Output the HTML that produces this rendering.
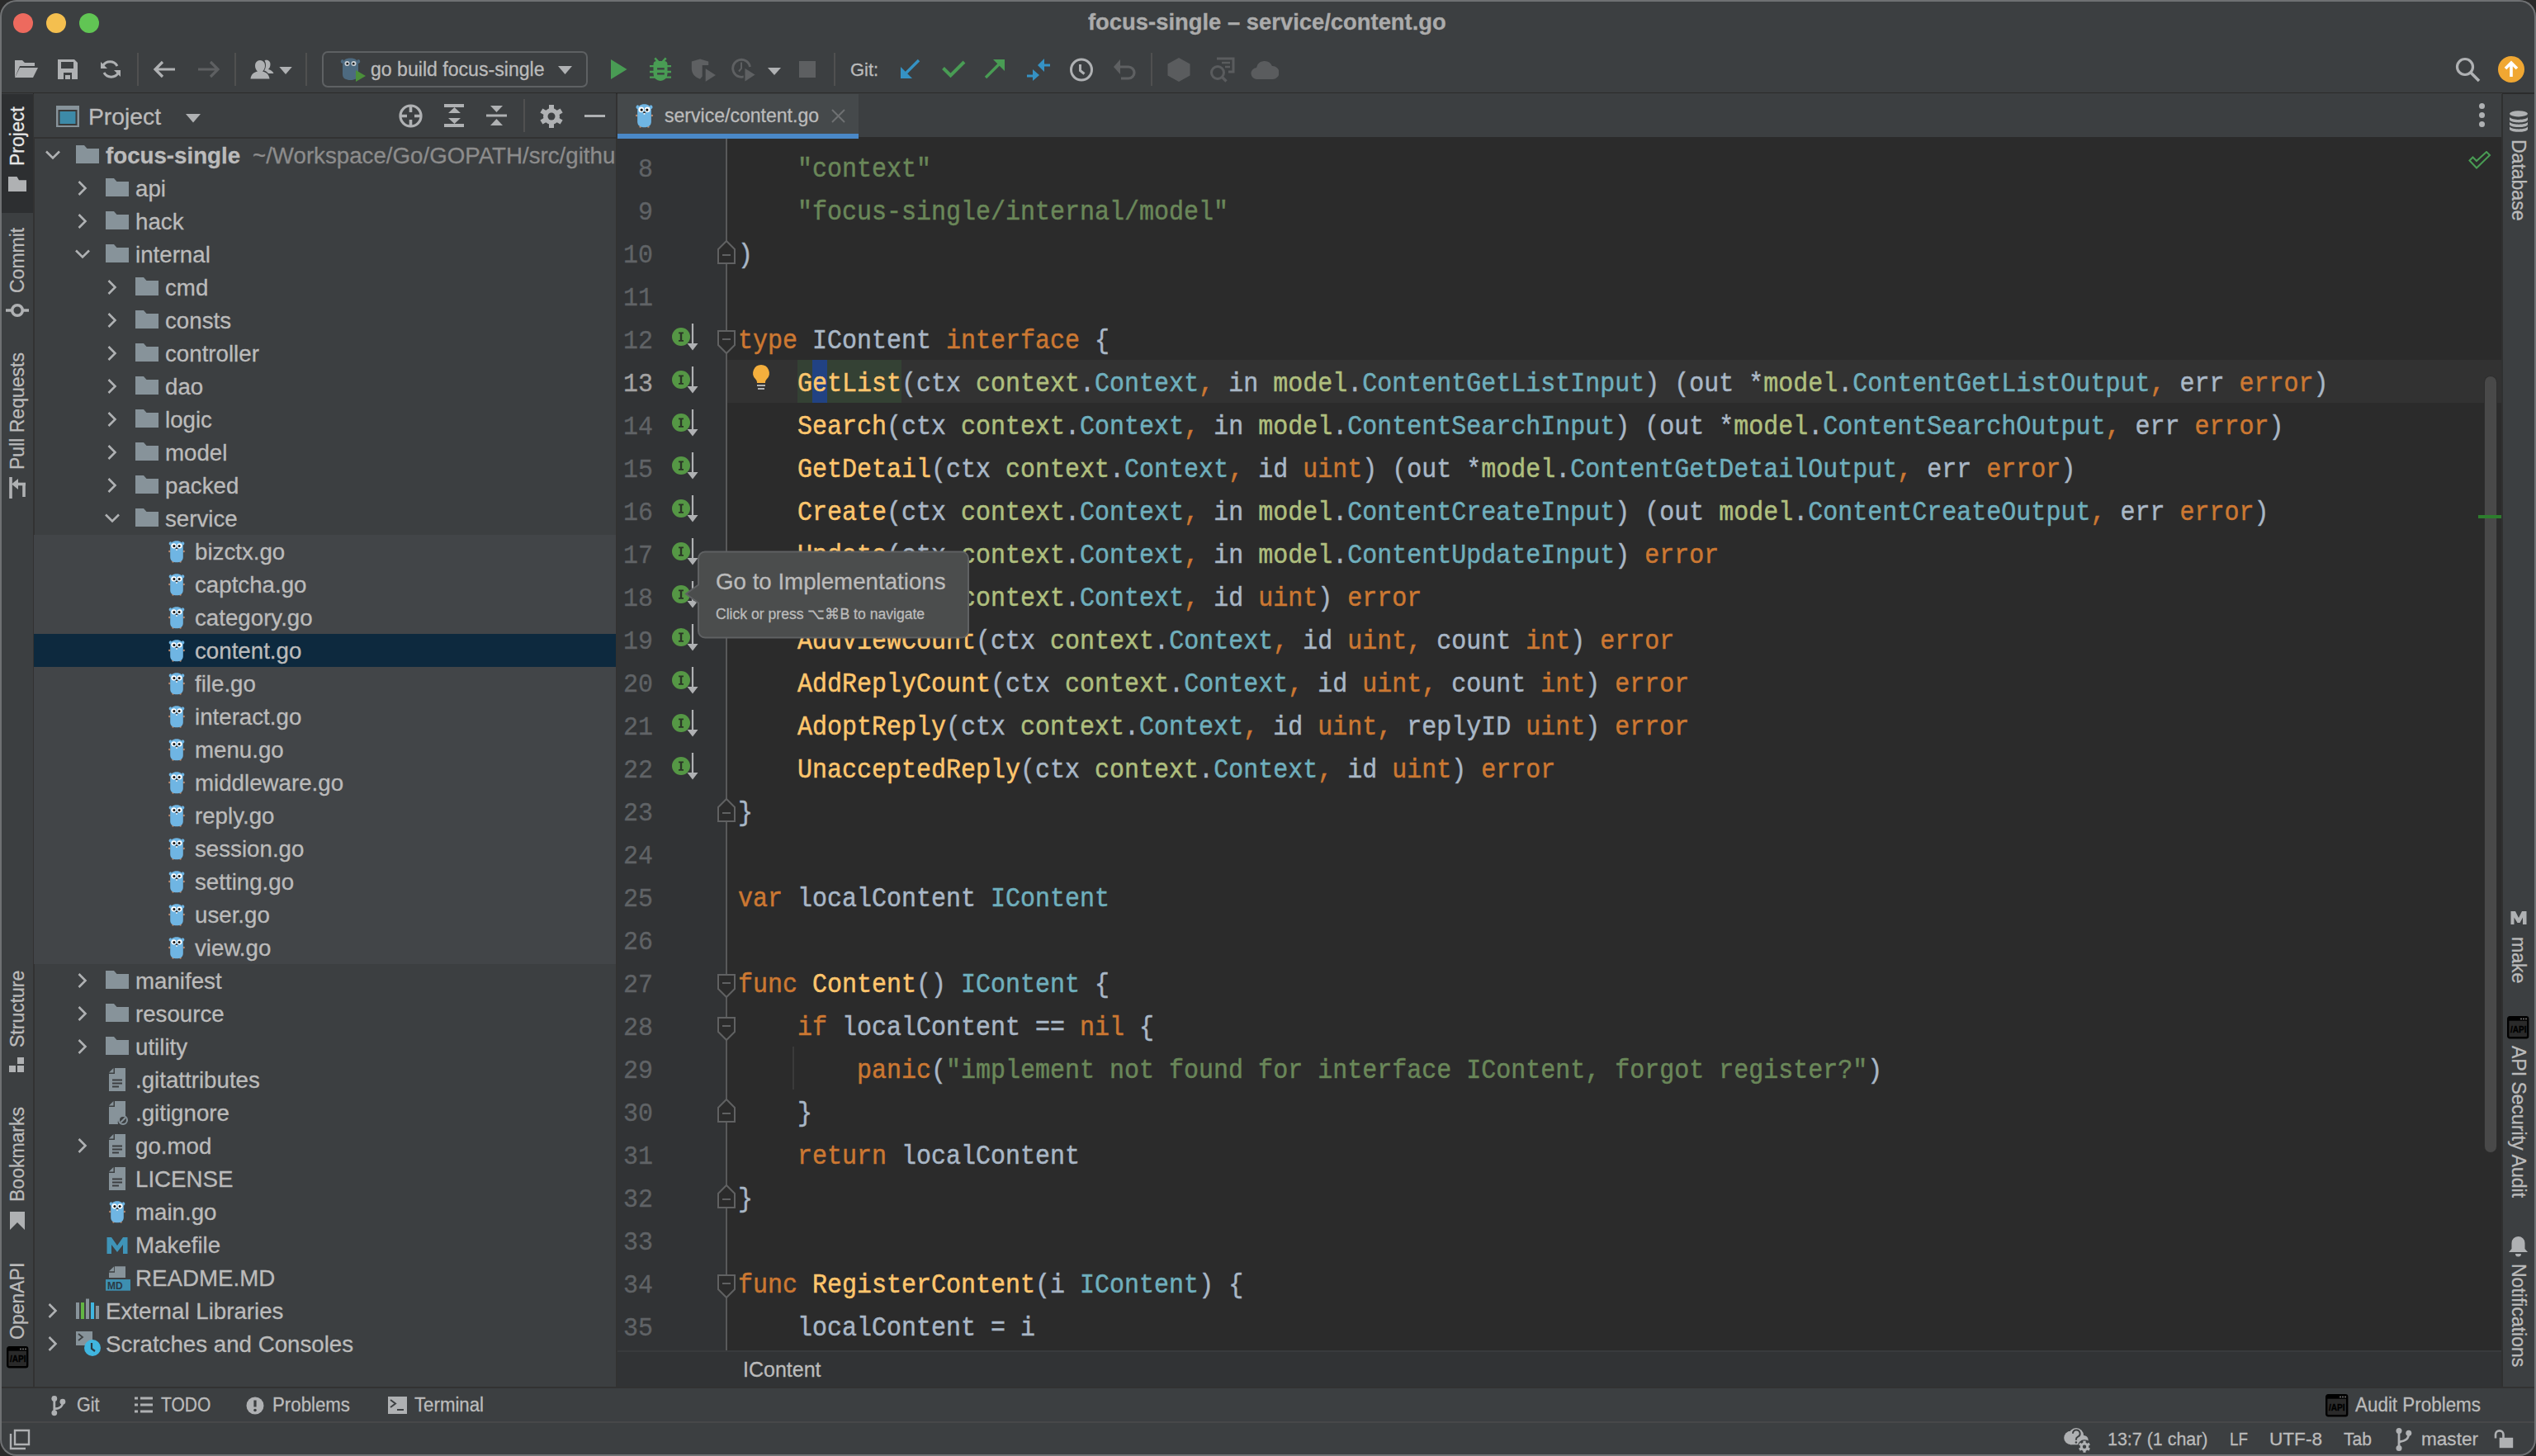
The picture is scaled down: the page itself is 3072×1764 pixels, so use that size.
<!DOCTYPE html><html><head><meta charset="utf-8"><style>
html,body{margin:0;padding:0}
body{width:3072px;height:1764px;overflow:hidden;background:#2a2a2a;position:relative}
.t{position:absolute;white-space:pre;line-height:normal;-webkit-text-stroke:0.3px currentColor}
.r{position:absolute}
</style></head><body>
<div class="r" style="left:0;top:0;width:3072px;height:1764px;background:#3c3f41;border-radius:20px;box-shadow:inset 0 0 0 2px #6f7173"></div>

<div class="r" style="left:16px;top:16px;width:24px;height:24px;border-radius:50%;background:#ed6a5e"></div>
<div class="r" style="left:56px;top:16px;width:24px;height:24px;border-radius:50%;background:#f4bf4f"></div>
<div class="r" style="left:96px;top:16px;width:24px;height:24px;border-radius:50%;background:#61c554"></div>
<div class="t" style="left:1318px;top:11.2px;font-size:27.4px;color:#ababab;font-weight:700;font-family:'Liberation Sans', sans-serif;">focus-single – service/content.go</div>
<div class="r" style="left:2px;top:112px;width:3068px;height:2px;background:#2b2b2b;"></div>
<div class="r" style="left:2px;top:113px;width:38px;height:1567px;background:#3c3f41;"></div>
<div class="r" style="left:40px;top:114px;width:2px;height:1566px;background:#323232;"></div>
<div class="r" style="left:2px;top:114px;width:38px;height:144px;background:#2d2f31;"></div>
<div class="r" style="left:41px;top:113px;width:705px;height:54px;background:#3c3f41;"></div>
<div class="r" style="left:41px;top:166px;width:705px;height:2px;background:#323232;"></div>
<div class="r" style="left:746px;top:114px;width:2px;height:1566px;background:#323232;"></div>
<div class="r" style="left:748px;top:113px;width:2283px;height:54px;background:#3c3f41;"></div>
<div class="r" style="left:748px;top:166px;width:2283px;height:2px;background:#2b2b2b;"></div>
<div class="r" style="left:748px;top:114px;width:292px;height:48px;background:#45494b;"></div>
<div class="r" style="left:748px;top:162px;width:292px;height:6px;background:#4a88c7;"></div>
<div class="r" style="left:748px;top:168px;width:133px;height:1468px;background:#313335;"></div>
<div class="r" style="left:881px;top:168px;width:2149px;height:1468px;background:#2b2b2b;"></div>
<div class="r" style="left:748px;top:1636px;width:2283px;height:2px;background:#393b3d;"></div>
<div class="r" style="left:748px;top:1638px;width:2283px;height:44px;background:#313335;"></div>
<div class="r" style="left:3030px;top:114px;width:2px;height:1566px;background:#2f3030;"></div>
<div class="r" style="left:3032px;top:114px;width:38px;height:1566px;background:#3c3f41;"></div>
<div class="r" style="left:2px;top:1680px;width:3068px;height:2px;background:#323232;"></div>
<div class="r" style="left:2px;top:1722px;width:3068px;height:2px;background:#474849;"></div>
<div class="r" style="left:881px;top:436px;width:2149px;height:52px;background:#323232;"></div>
<div class="r" style="left:966px;top:436px;width:126px;height:52px;background:#344134;"></div>
<div class="r" style="left:984px;top:436px;width:18px;height:52px;background:#214283;"></div>
<div class="r" style="left:879px;top:168px;width:2px;height:1468px;background:#58595a;"></div>
<div class="r" style="left:960px;top:1268px;width:2px;height:52px;background:#3b3b3b;"></div>
<div class="t" style="left:894px;top:189.0px;font-size:30px;color:#a9b7c6;font-weight:400;font-family:'Liberation Mono', monospace;-webkit-text-stroke:0.45px currentColor;transform-origin:0 25px;transform:scaleY(1.12)"><span style="color:#a9b7c6">    </span><span style="color:#6a8759">"context"</span></div>
<div class="t" style="left:894px;top:241.0px;font-size:30px;color:#a9b7c6;font-weight:400;font-family:'Liberation Mono', monospace;-webkit-text-stroke:0.45px currentColor;transform-origin:0 25px;transform:scaleY(1.12)"><span style="color:#a9b7c6">    </span><span style="color:#6a8759">"focus-single/internal/model"</span></div>
<div class="t" style="left:894px;top:293.0px;font-size:30px;color:#a9b7c6;font-weight:400;font-family:'Liberation Mono', monospace;-webkit-text-stroke:0.45px currentColor;transform-origin:0 25px;transform:scaleY(1.12)"><span style="color:#a9b7c6">)</span></div>
<div class="t" style="left:894px;top:397.0px;font-size:30px;color:#a9b7c6;font-weight:400;font-family:'Liberation Mono', monospace;-webkit-text-stroke:0.45px currentColor;transform-origin:0 25px;transform:scaleY(1.12)"><span style="color:#cc7832">type</span><span style="color:#a9b7c6"> IContent </span><span style="color:#cc7832">interface</span><span style="color:#a9b7c6"> {</span></div>
<div class="t" style="left:894px;top:449.0px;font-size:30px;color:#a9b7c6;font-weight:400;font-family:'Liberation Mono', monospace;-webkit-text-stroke:0.45px currentColor;transform-origin:0 25px;transform:scaleY(1.12)"><span style="color:#a9b7c6">    </span><span style="color:#ffc66d">GetList</span><span style="color:#a9b7c6">(ctx </span><span style="color:#afbf7e">context</span><span style="color:#a9b7c6">.</span><span style="color:#6fafbd">Context</span><span style="color:#cc7832">,</span><span style="color:#a9b7c6"> in </span><span style="color:#afbf7e">model</span><span style="color:#a9b7c6">.</span><span style="color:#6fafbd">ContentGetListInput</span><span style="color:#a9b7c6">) (out *</span><span style="color:#afbf7e">model</span><span style="color:#a9b7c6">.</span><span style="color:#6fafbd">ContentGetListOutput</span><span style="color:#cc7832">,</span><span style="color:#a9b7c6"> err </span><span style="color:#cc7832">error</span><span style="color:#a9b7c6">)</span></div>
<div class="t" style="left:894px;top:501.0px;font-size:30px;color:#a9b7c6;font-weight:400;font-family:'Liberation Mono', monospace;-webkit-text-stroke:0.45px currentColor;transform-origin:0 25px;transform:scaleY(1.12)"><span style="color:#a9b7c6">    </span><span style="color:#ffc66d">Search</span><span style="color:#a9b7c6">(ctx </span><span style="color:#afbf7e">context</span><span style="color:#a9b7c6">.</span><span style="color:#6fafbd">Context</span><span style="color:#cc7832">,</span><span style="color:#a9b7c6"> in </span><span style="color:#afbf7e">model</span><span style="color:#a9b7c6">.</span><span style="color:#6fafbd">ContentSearchInput</span><span style="color:#a9b7c6">) (out *</span><span style="color:#afbf7e">model</span><span style="color:#a9b7c6">.</span><span style="color:#6fafbd">ContentSearchOutput</span><span style="color:#cc7832">,</span><span style="color:#a9b7c6"> err </span><span style="color:#cc7832">error</span><span style="color:#a9b7c6">)</span></div>
<div class="t" style="left:894px;top:553.0px;font-size:30px;color:#a9b7c6;font-weight:400;font-family:'Liberation Mono', monospace;-webkit-text-stroke:0.45px currentColor;transform-origin:0 25px;transform:scaleY(1.12)"><span style="color:#a9b7c6">    </span><span style="color:#ffc66d">GetDetail</span><span style="color:#a9b7c6">(ctx </span><span style="color:#afbf7e">context</span><span style="color:#a9b7c6">.</span><span style="color:#6fafbd">Context</span><span style="color:#cc7832">,</span><span style="color:#a9b7c6"> id </span><span style="color:#cc7832">uint</span><span style="color:#a9b7c6">) (out *</span><span style="color:#afbf7e">model</span><span style="color:#a9b7c6">.</span><span style="color:#6fafbd">ContentGetDetailOutput</span><span style="color:#cc7832">,</span><span style="color:#a9b7c6"> err </span><span style="color:#cc7832">error</span><span style="color:#a9b7c6">)</span></div>
<div class="t" style="left:894px;top:605.0px;font-size:30px;color:#a9b7c6;font-weight:400;font-family:'Liberation Mono', monospace;-webkit-text-stroke:0.45px currentColor;transform-origin:0 25px;transform:scaleY(1.12)"><span style="color:#a9b7c6">    </span><span style="color:#ffc66d">Create</span><span style="color:#a9b7c6">(ctx </span><span style="color:#afbf7e">context</span><span style="color:#a9b7c6">.</span><span style="color:#6fafbd">Context</span><span style="color:#cc7832">,</span><span style="color:#a9b7c6"> in </span><span style="color:#afbf7e">model</span><span style="color:#a9b7c6">.</span><span style="color:#6fafbd">ContentCreateInput</span><span style="color:#a9b7c6">) (out </span><span style="color:#afbf7e">model</span><span style="color:#a9b7c6">.</span><span style="color:#6fafbd">ContentCreateOutput</span><span style="color:#cc7832">,</span><span style="color:#a9b7c6"> err </span><span style="color:#cc7832">error</span><span style="color:#a9b7c6">)</span></div>
<div class="t" style="left:894px;top:657.0px;font-size:30px;color:#a9b7c6;font-weight:400;font-family:'Liberation Mono', monospace;-webkit-text-stroke:0.45px currentColor;transform-origin:0 25px;transform:scaleY(1.12)"><span style="color:#a9b7c6">    </span><span style="color:#ffc66d">Update</span><span style="color:#a9b7c6">(ctx </span><span style="color:#afbf7e">context</span><span style="color:#a9b7c6">.</span><span style="color:#6fafbd">Context</span><span style="color:#cc7832">,</span><span style="color:#a9b7c6"> in </span><span style="color:#afbf7e">model</span><span style="color:#a9b7c6">.</span><span style="color:#6fafbd">ContentUpdateInput</span><span style="color:#a9b7c6">) </span><span style="color:#cc7832">error</span></div>
<div class="t" style="left:894px;top:709.0px;font-size:30px;color:#a9b7c6;font-weight:400;font-family:'Liberation Mono', monospace;-webkit-text-stroke:0.45px currentColor;transform-origin:0 25px;transform:scaleY(1.12)"><span style="color:#a9b7c6">    </span><span style="color:#ffc66d">Delete</span><span style="color:#a9b7c6">(ctx </span><span style="color:#afbf7e">context</span><span style="color:#a9b7c6">.</span><span style="color:#6fafbd">Context</span><span style="color:#cc7832">,</span><span style="color:#a9b7c6"> id </span><span style="color:#cc7832">uint</span><span style="color:#a9b7c6">) </span><span style="color:#cc7832">error</span></div>
<div class="t" style="left:894px;top:761.0px;font-size:30px;color:#a9b7c6;font-weight:400;font-family:'Liberation Mono', monospace;-webkit-text-stroke:0.45px currentColor;transform-origin:0 25px;transform:scaleY(1.12)"><span style="color:#a9b7c6">    </span><span style="color:#ffc66d">AddViewCount</span><span style="color:#a9b7c6">(ctx </span><span style="color:#afbf7e">context</span><span style="color:#a9b7c6">.</span><span style="color:#6fafbd">Context</span><span style="color:#cc7832">,</span><span style="color:#a9b7c6"> id </span><span style="color:#cc7832">uint</span><span style="color:#cc7832">,</span><span style="color:#a9b7c6"> count </span><span style="color:#cc7832">int</span><span style="color:#a9b7c6">) </span><span style="color:#cc7832">error</span></div>
<div class="t" style="left:894px;top:813.0px;font-size:30px;color:#a9b7c6;font-weight:400;font-family:'Liberation Mono', monospace;-webkit-text-stroke:0.45px currentColor;transform-origin:0 25px;transform:scaleY(1.12)"><span style="color:#a9b7c6">    </span><span style="color:#ffc66d">AddReplyCount</span><span style="color:#a9b7c6">(ctx </span><span style="color:#afbf7e">context</span><span style="color:#a9b7c6">.</span><span style="color:#6fafbd">Context</span><span style="color:#cc7832">,</span><span style="color:#a9b7c6"> id </span><span style="color:#cc7832">uint</span><span style="color:#cc7832">,</span><span style="color:#a9b7c6"> count </span><span style="color:#cc7832">int</span><span style="color:#a9b7c6">) </span><span style="color:#cc7832">error</span></div>
<div class="t" style="left:894px;top:865.0px;font-size:30px;color:#a9b7c6;font-weight:400;font-family:'Liberation Mono', monospace;-webkit-text-stroke:0.45px currentColor;transform-origin:0 25px;transform:scaleY(1.12)"><span style="color:#a9b7c6">    </span><span style="color:#ffc66d">AdoptReply</span><span style="color:#a9b7c6">(ctx </span><span style="color:#afbf7e">context</span><span style="color:#a9b7c6">.</span><span style="color:#6fafbd">Context</span><span style="color:#cc7832">,</span><span style="color:#a9b7c6"> id </span><span style="color:#cc7832">uint</span><span style="color:#cc7832">,</span><span style="color:#a9b7c6"> replyID </span><span style="color:#cc7832">uint</span><span style="color:#a9b7c6">) </span><span style="color:#cc7832">error</span></div>
<div class="t" style="left:894px;top:917.0px;font-size:30px;color:#a9b7c6;font-weight:400;font-family:'Liberation Mono', monospace;-webkit-text-stroke:0.45px currentColor;transform-origin:0 25px;transform:scaleY(1.12)"><span style="color:#a9b7c6">    </span><span style="color:#ffc66d">UnacceptedReply</span><span style="color:#a9b7c6">(ctx </span><span style="color:#afbf7e">context</span><span style="color:#a9b7c6">.</span><span style="color:#6fafbd">Context</span><span style="color:#cc7832">,</span><span style="color:#a9b7c6"> id </span><span style="color:#cc7832">uint</span><span style="color:#a9b7c6">) </span><span style="color:#cc7832">error</span></div>
<div class="t" style="left:894px;top:969.0px;font-size:30px;color:#a9b7c6;font-weight:400;font-family:'Liberation Mono', monospace;-webkit-text-stroke:0.45px currentColor;transform-origin:0 25px;transform:scaleY(1.12)"><span style="color:#a9b7c6">}</span></div>
<div class="t" style="left:894px;top:1073.0px;font-size:30px;color:#a9b7c6;font-weight:400;font-family:'Liberation Mono', monospace;-webkit-text-stroke:0.45px currentColor;transform-origin:0 25px;transform:scaleY(1.12)"><span style="color:#cc7832">var</span><span style="color:#a9b7c6"> localContent </span><span style="color:#6fafbd">IContent</span></div>
<div class="t" style="left:894px;top:1177.0px;font-size:30px;color:#a9b7c6;font-weight:400;font-family:'Liberation Mono', monospace;-webkit-text-stroke:0.45px currentColor;transform-origin:0 25px;transform:scaleY(1.12)"><span style="color:#cc7832">func</span><span style="color:#a9b7c6"> </span><span style="color:#ffc66d">Content</span><span style="color:#a9b7c6">() </span><span style="color:#6fafbd">IContent</span><span style="color:#a9b7c6"> {</span></div>
<div class="t" style="left:894px;top:1229.0px;font-size:30px;color:#a9b7c6;font-weight:400;font-family:'Liberation Mono', monospace;-webkit-text-stroke:0.45px currentColor;transform-origin:0 25px;transform:scaleY(1.12)"><span style="color:#a9b7c6">    </span><span style="color:#cc7832">if</span><span style="color:#a9b7c6"> localContent == </span><span style="color:#cc7832">nil</span><span style="color:#a9b7c6"> {</span></div>
<div class="t" style="left:894px;top:1281.0px;font-size:30px;color:#a9b7c6;font-weight:400;font-family:'Liberation Mono', monospace;-webkit-text-stroke:0.45px currentColor;transform-origin:0 25px;transform:scaleY(1.12)"><span style="color:#a9b7c6">        </span><span style="color:#cc7832">panic</span><span style="color:#a9b7c6">(</span><span style="color:#6a8759">"implement not found for interface IContent, forgot register?"</span><span style="color:#a9b7c6">)</span></div>
<div class="t" style="left:894px;top:1333.0px;font-size:30px;color:#a9b7c6;font-weight:400;font-family:'Liberation Mono', monospace;-webkit-text-stroke:0.45px currentColor;transform-origin:0 25px;transform:scaleY(1.12)"><span style="color:#a9b7c6">    }</span></div>
<div class="t" style="left:894px;top:1385.0px;font-size:30px;color:#a9b7c6;font-weight:400;font-family:'Liberation Mono', monospace;-webkit-text-stroke:0.45px currentColor;transform-origin:0 25px;transform:scaleY(1.12)"><span style="color:#a9b7c6">    </span><span style="color:#cc7832">return</span><span style="color:#a9b7c6"> localContent</span></div>
<div class="t" style="left:894px;top:1437.0px;font-size:30px;color:#a9b7c6;font-weight:400;font-family:'Liberation Mono', monospace;-webkit-text-stroke:0.45px currentColor;transform-origin:0 25px;transform:scaleY(1.12)"><span style="color:#a9b7c6">}</span></div>
<div class="t" style="left:894px;top:1541.0px;font-size:30px;color:#a9b7c6;font-weight:400;font-family:'Liberation Mono', monospace;-webkit-text-stroke:0.45px currentColor;transform-origin:0 25px;transform:scaleY(1.12)"><span style="color:#cc7832">func</span><span style="color:#a9b7c6"> </span><span style="color:#ffc66d">RegisterContent</span><span style="color:#a9b7c6">(i </span><span style="color:#6fafbd">IContent</span><span style="color:#a9b7c6">) {</span></div>
<div class="t" style="left:894px;top:1593.0px;font-size:30px;color:#a9b7c6;font-weight:400;font-family:'Liberation Mono', monospace;-webkit-text-stroke:0.45px currentColor;transform-origin:0 25px;transform:scaleY(1.12)"><span style="color:#a9b7c6">    localContent = i</span></div>
<div class="t" style="left:773px;top:189.0px;font-size:30px;color:#606366;font-weight:400;font-family:'Liberation Mono', monospace;transform-origin:0 25px;transform:scaleY(1.06)">8</div>
<div class="t" style="left:773px;top:241.0px;font-size:30px;color:#606366;font-weight:400;font-family:'Liberation Mono', monospace;transform-origin:0 25px;transform:scaleY(1.06)">9</div>
<div class="t" style="left:755px;top:293.0px;font-size:30px;color:#606366;font-weight:400;font-family:'Liberation Mono', monospace;transform-origin:0 25px;transform:scaleY(1.06)">10</div>
<div class="t" style="left:755px;top:345.0px;font-size:30px;color:#606366;font-weight:400;font-family:'Liberation Mono', monospace;transform-origin:0 25px;transform:scaleY(1.06)">11</div>
<div class="t" style="left:755px;top:397.0px;font-size:30px;color:#606366;font-weight:400;font-family:'Liberation Mono', monospace;transform-origin:0 25px;transform:scaleY(1.06)">12</div>
<div class="t" style="left:755px;top:449.0px;font-size:30px;color:#a4a3a3;font-weight:400;font-family:'Liberation Mono', monospace;transform-origin:0 25px;transform:scaleY(1.06)">13</div>
<div class="t" style="left:755px;top:501.0px;font-size:30px;color:#606366;font-weight:400;font-family:'Liberation Mono', monospace;transform-origin:0 25px;transform:scaleY(1.06)">14</div>
<div class="t" style="left:755px;top:553.0px;font-size:30px;color:#606366;font-weight:400;font-family:'Liberation Mono', monospace;transform-origin:0 25px;transform:scaleY(1.06)">15</div>
<div class="t" style="left:755px;top:605.0px;font-size:30px;color:#606366;font-weight:400;font-family:'Liberation Mono', monospace;transform-origin:0 25px;transform:scaleY(1.06)">16</div>
<div class="t" style="left:755px;top:657.0px;font-size:30px;color:#606366;font-weight:400;font-family:'Liberation Mono', monospace;transform-origin:0 25px;transform:scaleY(1.06)">17</div>
<div class="t" style="left:755px;top:709.0px;font-size:30px;color:#606366;font-weight:400;font-family:'Liberation Mono', monospace;transform-origin:0 25px;transform:scaleY(1.06)">18</div>
<div class="t" style="left:755px;top:761.0px;font-size:30px;color:#606366;font-weight:400;font-family:'Liberation Mono', monospace;transform-origin:0 25px;transform:scaleY(1.06)">19</div>
<div class="t" style="left:755px;top:813.0px;font-size:30px;color:#606366;font-weight:400;font-family:'Liberation Mono', monospace;transform-origin:0 25px;transform:scaleY(1.06)">20</div>
<div class="t" style="left:755px;top:865.0px;font-size:30px;color:#606366;font-weight:400;font-family:'Liberation Mono', monospace;transform-origin:0 25px;transform:scaleY(1.06)">21</div>
<div class="t" style="left:755px;top:917.0px;font-size:30px;color:#606366;font-weight:400;font-family:'Liberation Mono', monospace;transform-origin:0 25px;transform:scaleY(1.06)">22</div>
<div class="t" style="left:755px;top:969.0px;font-size:30px;color:#606366;font-weight:400;font-family:'Liberation Mono', monospace;transform-origin:0 25px;transform:scaleY(1.06)">23</div>
<div class="t" style="left:755px;top:1021.0px;font-size:30px;color:#606366;font-weight:400;font-family:'Liberation Mono', monospace;transform-origin:0 25px;transform:scaleY(1.06)">24</div>
<div class="t" style="left:755px;top:1073.0px;font-size:30px;color:#606366;font-weight:400;font-family:'Liberation Mono', monospace;transform-origin:0 25px;transform:scaleY(1.06)">25</div>
<div class="t" style="left:755px;top:1125.0px;font-size:30px;color:#606366;font-weight:400;font-family:'Liberation Mono', monospace;transform-origin:0 25px;transform:scaleY(1.06)">26</div>
<div class="t" style="left:755px;top:1177.0px;font-size:30px;color:#606366;font-weight:400;font-family:'Liberation Mono', monospace;transform-origin:0 25px;transform:scaleY(1.06)">27</div>
<div class="t" style="left:755px;top:1229.0px;font-size:30px;color:#606366;font-weight:400;font-family:'Liberation Mono', monospace;transform-origin:0 25px;transform:scaleY(1.06)">28</div>
<div class="t" style="left:755px;top:1281.0px;font-size:30px;color:#606366;font-weight:400;font-family:'Liberation Mono', monospace;transform-origin:0 25px;transform:scaleY(1.06)">29</div>
<div class="t" style="left:755px;top:1333.0px;font-size:30px;color:#606366;font-weight:400;font-family:'Liberation Mono', monospace;transform-origin:0 25px;transform:scaleY(1.06)">30</div>
<div class="t" style="left:755px;top:1385.0px;font-size:30px;color:#606366;font-weight:400;font-family:'Liberation Mono', monospace;transform-origin:0 25px;transform:scaleY(1.06)">31</div>
<div class="t" style="left:755px;top:1437.0px;font-size:30px;color:#606366;font-weight:400;font-family:'Liberation Mono', monospace;transform-origin:0 25px;transform:scaleY(1.06)">32</div>
<div class="t" style="left:755px;top:1489.0px;font-size:30px;color:#606366;font-weight:400;font-family:'Liberation Mono', monospace;transform-origin:0 25px;transform:scaleY(1.06)">33</div>
<div class="t" style="left:755px;top:1541.0px;font-size:30px;color:#606366;font-weight:400;font-family:'Liberation Mono', monospace;transform-origin:0 25px;transform:scaleY(1.06)">34</div>
<div class="t" style="left:755px;top:1593.0px;font-size:30px;color:#606366;font-weight:400;font-family:'Liberation Mono', monospace;transform-origin:0 25px;transform:scaleY(1.06)">35</div>
<svg class="r" style="left:812px;top:390px" width="38" height="40" viewBox="0 0 38 40"><circle cx="13" cy="18" r="11" fill="#559745"/>
<path d="M10 13.4h6M10 22.8h6" stroke="#2a3526" stroke-width="1.8" fill="none"/><path d="M13 13.4v9.4" stroke="#2a3526" stroke-width="2.4" fill="none"/>
<path d="M27 2v26" stroke="#afb1b3" stroke-width="2.2"/><path d="M20.5 26h13L27 34.5z" fill="#afb1b3"/></svg>
<svg class="r" style="left:812px;top:442px" width="38" height="40" viewBox="0 0 38 40"><circle cx="13" cy="18" r="11" fill="#559745"/>
<path d="M10 13.4h6M10 22.8h6" stroke="#2a3526" stroke-width="1.8" fill="none"/><path d="M13 13.4v9.4" stroke="#2a3526" stroke-width="2.4" fill="none"/>
<path d="M27 2v26" stroke="#afb1b3" stroke-width="2.2"/><path d="M20.5 26h13L27 34.5z" fill="#afb1b3"/></svg>
<svg class="r" style="left:812px;top:494px" width="38" height="40" viewBox="0 0 38 40"><circle cx="13" cy="18" r="11" fill="#559745"/>
<path d="M10 13.4h6M10 22.8h6" stroke="#2a3526" stroke-width="1.8" fill="none"/><path d="M13 13.4v9.4" stroke="#2a3526" stroke-width="2.4" fill="none"/>
<path d="M27 2v26" stroke="#afb1b3" stroke-width="2.2"/><path d="M20.5 26h13L27 34.5z" fill="#afb1b3"/></svg>
<svg class="r" style="left:812px;top:546px" width="38" height="40" viewBox="0 0 38 40"><circle cx="13" cy="18" r="11" fill="#559745"/>
<path d="M10 13.4h6M10 22.8h6" stroke="#2a3526" stroke-width="1.8" fill="none"/><path d="M13 13.4v9.4" stroke="#2a3526" stroke-width="2.4" fill="none"/>
<path d="M27 2v26" stroke="#afb1b3" stroke-width="2.2"/><path d="M20.5 26h13L27 34.5z" fill="#afb1b3"/></svg>
<svg class="r" style="left:812px;top:598px" width="38" height="40" viewBox="0 0 38 40"><circle cx="13" cy="18" r="11" fill="#559745"/>
<path d="M10 13.4h6M10 22.8h6" stroke="#2a3526" stroke-width="1.8" fill="none"/><path d="M13 13.4v9.4" stroke="#2a3526" stroke-width="2.4" fill="none"/>
<path d="M27 2v26" stroke="#afb1b3" stroke-width="2.2"/><path d="M20.5 26h13L27 34.5z" fill="#afb1b3"/></svg>
<svg class="r" style="left:812px;top:650px" width="38" height="40" viewBox="0 0 38 40"><circle cx="13" cy="18" r="11" fill="#559745"/>
<path d="M10 13.4h6M10 22.8h6" stroke="#2a3526" stroke-width="1.8" fill="none"/><path d="M13 13.4v9.4" stroke="#2a3526" stroke-width="2.4" fill="none"/>
<path d="M27 2v26" stroke="#afb1b3" stroke-width="2.2"/><path d="M20.5 26h13L27 34.5z" fill="#afb1b3"/></svg>
<svg class="r" style="left:812px;top:702px" width="38" height="40" viewBox="0 0 38 40"><circle cx="13" cy="18" r="11" fill="#559745"/>
<path d="M10 13.4h6M10 22.8h6" stroke="#2a3526" stroke-width="1.8" fill="none"/><path d="M13 13.4v9.4" stroke="#2a3526" stroke-width="2.4" fill="none"/>
<path d="M27 2v26" stroke="#afb1b3" stroke-width="2.2"/><path d="M20.5 26h13L27 34.5z" fill="#afb1b3"/></svg>
<svg class="r" style="left:812px;top:754px" width="38" height="40" viewBox="0 0 38 40"><circle cx="13" cy="18" r="11" fill="#559745"/>
<path d="M10 13.4h6M10 22.8h6" stroke="#2a3526" stroke-width="1.8" fill="none"/><path d="M13 13.4v9.4" stroke="#2a3526" stroke-width="2.4" fill="none"/>
<path d="M27 2v26" stroke="#afb1b3" stroke-width="2.2"/><path d="M20.5 26h13L27 34.5z" fill="#afb1b3"/></svg>
<svg class="r" style="left:812px;top:806px" width="38" height="40" viewBox="0 0 38 40"><circle cx="13" cy="18" r="11" fill="#559745"/>
<path d="M10 13.4h6M10 22.8h6" stroke="#2a3526" stroke-width="1.8" fill="none"/><path d="M13 13.4v9.4" stroke="#2a3526" stroke-width="2.4" fill="none"/>
<path d="M27 2v26" stroke="#afb1b3" stroke-width="2.2"/><path d="M20.5 26h13L27 34.5z" fill="#afb1b3"/></svg>
<svg class="r" style="left:812px;top:858px" width="38" height="40" viewBox="0 0 38 40"><circle cx="13" cy="18" r="11" fill="#559745"/>
<path d="M10 13.4h6M10 22.8h6" stroke="#2a3526" stroke-width="1.8" fill="none"/><path d="M13 13.4v9.4" stroke="#2a3526" stroke-width="2.4" fill="none"/>
<path d="M27 2v26" stroke="#afb1b3" stroke-width="2.2"/><path d="M20.5 26h13L27 34.5z" fill="#afb1b3"/></svg>
<svg class="r" style="left:812px;top:910px" width="38" height="40" viewBox="0 0 38 40"><circle cx="13" cy="18" r="11" fill="#559745"/>
<path d="M10 13.4h6M10 22.8h6" stroke="#2a3526" stroke-width="1.8" fill="none"/><path d="M13 13.4v9.4" stroke="#2a3526" stroke-width="2.4" fill="none"/>
<path d="M27 2v26" stroke="#afb1b3" stroke-width="2.2"/><path d="M20.5 26h13L27 34.5z" fill="#afb1b3"/></svg>
<svg class="r" style="left:868px;top:400px" width="24" height="30" viewBox="0 0 24 30"><path d="M2 1h20v17l-10 10l-10-10z" fill="#2b2b2b" stroke="#606162" stroke-width="2"/><path d="M7 11h10" stroke="#606162" stroke-width="2"/></svg>
<svg class="r" style="left:868px;top:1180px" width="24" height="30" viewBox="0 0 24 30"><path d="M2 1h20v17l-10 10l-10-10z" fill="#2b2b2b" stroke="#606162" stroke-width="2"/><path d="M7 11h10" stroke="#606162" stroke-width="2"/></svg>
<svg class="r" style="left:868px;top:1232px" width="24" height="30" viewBox="0 0 24 30"><path d="M2 1h20v17l-10 10l-10-10z" fill="#2b2b2b" stroke="#606162" stroke-width="2"/><path d="M7 11h10" stroke="#606162" stroke-width="2"/></svg>
<svg class="r" style="left:868px;top:1544px" width="24" height="30" viewBox="0 0 24 30"><path d="M2 1h20v17l-10 10l-10-10z" fill="#2b2b2b" stroke="#606162" stroke-width="2"/><path d="M7 11h10" stroke="#606162" stroke-width="2"/></svg>
<svg class="r" style="left:868px;top:290px" width="24" height="30" viewBox="0 0 24 30"><path d="M2 29h20v-17l-10-10l-10 10z" fill="#2b2b2b" stroke="#606162" stroke-width="2"/><path d="M7 19h10" stroke="#606162" stroke-width="2"/></svg>
<svg class="r" style="left:868px;top:966px" width="24" height="30" viewBox="0 0 24 30"><path d="M2 29h20v-17l-10-10l-10 10z" fill="#2b2b2b" stroke="#606162" stroke-width="2"/><path d="M7 19h10" stroke="#606162" stroke-width="2"/></svg>
<svg class="r" style="left:868px;top:1330px" width="24" height="30" viewBox="0 0 24 30"><path d="M2 29h20v-17l-10-10l-10 10z" fill="#2b2b2b" stroke="#606162" stroke-width="2"/><path d="M7 19h10" stroke="#606162" stroke-width="2"/></svg>
<svg class="r" style="left:868px;top:1434px" width="24" height="30" viewBox="0 0 24 30"><path d="M2 29h20v-17l-10-10l-10 10z" fill="#2b2b2b" stroke="#606162" stroke-width="2"/><path d="M7 19h10" stroke="#606162" stroke-width="2"/></svg>
<svg class="r" style="left:910px;top:441px" width="24" height="32" viewBox="0 0 24 32"><path d="M12 1a10 10 0 0 1 7 17c-1.5 1.6-2 3-2 5H7c0-2-.5-3.4-2-5A10 10 0 0 1 12 1z" fill="#f4af3d"/><path d="M7 26h10M8 30h8" stroke="#afb1b3" stroke-width="2"/></svg>
<svg class="r" style="left:2990px;top:183px" width="28" height="24" viewBox="0 0 28 24"><path d="M1.5 11.5l4-4l4.5 4.5l12-11l4 4l-16 15.5z" fill="none" stroke="#499c54" stroke-width="2" stroke-linejoin="miter"/></svg>
<div class="r" style="left:3010px;top:456px;width:14px;height:940px;border-radius:7px;background:#494949;box-shadow:0 0 0 1px #2e2e2e"></div>
<div class="r" style="left:3002px;top:624px;width:28px;height:4px;background:#2d7d2d;"></div>
<div class="r" style="left:3003px;top:125px;width:7px;height:7px;border-radius:50%;background:#afb1b3"></div>
<div class="r" style="left:3003px;top:136px;width:7px;height:7px;border-radius:50%;background:#afb1b3"></div>
<div class="r" style="left:3003px;top:147px;width:7px;height:7px;border-radius:50%;background:#afb1b3"></div>
<svg class="r" style="left:826px;top:666px" width="350" height="110" viewBox="0 0 350 110">
<path d="M28 2.5h311a8 8 0 0 1 8 8v88a8 8 0 0 1 -8 8h-311a8 8 0 0 1 -8 -8v-34l-15 -11l15 -11v-32a8 8 0 0 1 8 -8z" fill="#4b4d4d" stroke="#5f6163" stroke-width="2"/></svg>
<div class="t" style="left:867px;top:688.9px;font-size:27.7px;color:#bbbbbb;font-weight:400;font-family:'Liberation Sans', sans-serif;">Go to Implementations</div>
<div class="t" style="left:867px;top:734.1px;font-size:17.6px;color:#bbbbbb;font-weight:400;font-family:'Liberation Sans', sans-serif;">Click or press ⌥⌘B to navigate</div>
<div class="t" style="left:900px;top:1645.4px;font-size:25px;color:#bbbbbb;font-weight:400;font-family:'Liberation Sans', sans-serif;">IContent</div>
<div class="r" style="left:41px;top:648px;width:705px;height:520px;background:#424548;"></div>
<div class="r" style="left:41px;top:768px;width:705px;height:40px;background:#0d293e;"></div>
<svg class="r" style="left:54px;top:181px" width="20" height="14" viewBox="0 0 20 14"><path d="M2 2.5L10 10.5L18 2.5" stroke="#afb1b3" stroke-width="2.6" fill="none"/></svg>
<svg class="r" style="left:92.0px;top:176px" width="28" height="23" viewBox="0 0 28 23"><path d="M0 0H10L13.5 4H28V22H0z" fill="#87939a"/></svg>
<div class="t" style="left:128px;top:173.4px;font-size:27.7px;color:#bbbbbb;font-weight:700;font-family:'Liberation Sans', sans-serif;">focus-single</div>
<div class="t" style="left:306px;top:173.4px;font-size:27.7px;color:#8c8c8c;font-weight:400;font-family:'Liberation Sans', sans-serif;width:439px;overflow:hidden">~/Workspace/Go/GOPATH/src/github.com/gogf/focus</div>
<svg class="r" style="left:93px;top:218px" width="14" height="20" viewBox="0 0 14 20"><path d="M2.5 2L10.5 10L2.5 18" stroke="#afb1b3" stroke-width="2.6" fill="none"/></svg>
<svg class="r" style="left:128.0px;top:216px" width="28" height="23" viewBox="0 0 28 23"><path d="M0 0H10L13.5 4H28V22H0z" fill="#87939a"/></svg>
<div class="t" style="left:164px;top:213.4px;font-size:27.7px;color:#bbbbbb;font-weight:400;font-family:'Liberation Sans', sans-serif;">api</div>
<svg class="r" style="left:93px;top:258px" width="14" height="20" viewBox="0 0 14 20"><path d="M2.5 2L10.5 10L2.5 18" stroke="#afb1b3" stroke-width="2.6" fill="none"/></svg>
<svg class="r" style="left:128.0px;top:256px" width="28" height="23" viewBox="0 0 28 23"><path d="M0 0H10L13.5 4H28V22H0z" fill="#87939a"/></svg>
<div class="t" style="left:164px;top:253.4px;font-size:27.7px;color:#bbbbbb;font-weight:400;font-family:'Liberation Sans', sans-serif;">hack</div>
<svg class="r" style="left:90px;top:301px" width="20" height="14" viewBox="0 0 20 14"><path d="M2 2.5L10 10.5L18 2.5" stroke="#afb1b3" stroke-width="2.6" fill="none"/></svg>
<svg class="r" style="left:128.0px;top:296px" width="28" height="23" viewBox="0 0 28 23"><path d="M0 0H10L13.5 4H28V22H0z" fill="#87939a"/></svg>
<div class="t" style="left:164px;top:293.4px;font-size:27.7px;color:#bbbbbb;font-weight:400;font-family:'Liberation Sans', sans-serif;">internal</div>
<svg class="r" style="left:129px;top:338px" width="14" height="20" viewBox="0 0 14 20"><path d="M2.5 2L10.5 10L2.5 18" stroke="#afb1b3" stroke-width="2.6" fill="none"/></svg>
<svg class="r" style="left:164.0px;top:336px" width="28" height="23" viewBox="0 0 28 23"><path d="M0 0H10L13.5 4H28V22H0z" fill="#87939a"/></svg>
<div class="t" style="left:200px;top:333.4px;font-size:27.7px;color:#bbbbbb;font-weight:400;font-family:'Liberation Sans', sans-serif;">cmd</div>
<svg class="r" style="left:129px;top:378px" width="14" height="20" viewBox="0 0 14 20"><path d="M2.5 2L10.5 10L2.5 18" stroke="#afb1b3" stroke-width="2.6" fill="none"/></svg>
<svg class="r" style="left:164.0px;top:376px" width="28" height="23" viewBox="0 0 28 23"><path d="M0 0H10L13.5 4H28V22H0z" fill="#87939a"/></svg>
<div class="t" style="left:200px;top:373.4px;font-size:27.7px;color:#bbbbbb;font-weight:400;font-family:'Liberation Sans', sans-serif;">consts</div>
<svg class="r" style="left:129px;top:418px" width="14" height="20" viewBox="0 0 14 20"><path d="M2.5 2L10.5 10L2.5 18" stroke="#afb1b3" stroke-width="2.6" fill="none"/></svg>
<svg class="r" style="left:164.0px;top:416px" width="28" height="23" viewBox="0 0 28 23"><path d="M0 0H10L13.5 4H28V22H0z" fill="#87939a"/></svg>
<div class="t" style="left:200px;top:413.4px;font-size:27.7px;color:#bbbbbb;font-weight:400;font-family:'Liberation Sans', sans-serif;">controller</div>
<svg class="r" style="left:129px;top:458px" width="14" height="20" viewBox="0 0 14 20"><path d="M2.5 2L10.5 10L2.5 18" stroke="#afb1b3" stroke-width="2.6" fill="none"/></svg>
<svg class="r" style="left:164.0px;top:456px" width="28" height="23" viewBox="0 0 28 23"><path d="M0 0H10L13.5 4H28V22H0z" fill="#87939a"/></svg>
<div class="t" style="left:200px;top:453.4px;font-size:27.7px;color:#bbbbbb;font-weight:400;font-family:'Liberation Sans', sans-serif;">dao</div>
<svg class="r" style="left:129px;top:498px" width="14" height="20" viewBox="0 0 14 20"><path d="M2.5 2L10.5 10L2.5 18" stroke="#afb1b3" stroke-width="2.6" fill="none"/></svg>
<svg class="r" style="left:164.0px;top:496px" width="28" height="23" viewBox="0 0 28 23"><path d="M0 0H10L13.5 4H28V22H0z" fill="#87939a"/></svg>
<div class="t" style="left:200px;top:493.4px;font-size:27.7px;color:#bbbbbb;font-weight:400;font-family:'Liberation Sans', sans-serif;">logic</div>
<svg class="r" style="left:129px;top:538px" width="14" height="20" viewBox="0 0 14 20"><path d="M2.5 2L10.5 10L2.5 18" stroke="#afb1b3" stroke-width="2.6" fill="none"/></svg>
<svg class="r" style="left:164.0px;top:536px" width="28" height="23" viewBox="0 0 28 23"><path d="M0 0H10L13.5 4H28V22H0z" fill="#87939a"/></svg>
<div class="t" style="left:200px;top:533.4px;font-size:27.7px;color:#bbbbbb;font-weight:400;font-family:'Liberation Sans', sans-serif;">model</div>
<svg class="r" style="left:129px;top:578px" width="14" height="20" viewBox="0 0 14 20"><path d="M2.5 2L10.5 10L2.5 18" stroke="#afb1b3" stroke-width="2.6" fill="none"/></svg>
<svg class="r" style="left:164.0px;top:576px" width="28" height="23" viewBox="0 0 28 23"><path d="M0 0H10L13.5 4H28V22H0z" fill="#87939a"/></svg>
<div class="t" style="left:200px;top:573.4px;font-size:27.7px;color:#bbbbbb;font-weight:400;font-family:'Liberation Sans', sans-serif;">packed</div>
<svg class="r" style="left:126px;top:621px" width="20" height="14" viewBox="0 0 20 14"><path d="M2 2.5L10 10.5L18 2.5" stroke="#afb1b3" stroke-width="2.6" fill="none"/></svg>
<svg class="r" style="left:164.0px;top:616px" width="28" height="23" viewBox="0 0 28 23"><path d="M0 0H10L13.5 4H28V22H0z" fill="#87939a"/></svg>
<div class="t" style="left:200px;top:613.4px;font-size:27.7px;color:#bbbbbb;font-weight:400;font-family:'Liberation Sans', sans-serif;">service</div>
<svg class="r" style="left:203.5px;top:654px" width="20" height="28" viewBox="0 0 20 28"><path d="M3.2 2.2a2.3 2.3 0 1 0 1.6 3.6zM16.8 2.2a2.3 2.3 0 1 1 -1.6 3.6z" fill="#6fb5e3"/>
<circle cx="1.3" cy="14" r="1.2" fill="#b9876a"/><circle cx="18.7" cy="14" r="1.2" fill="#b9876a"/>
<circle cx="5.5" cy="26.6" r="1.2" fill="#b9876a"/><circle cx="14.5" cy="26.6" r="1.2" fill="#b9876a"/>
<path d="M2.2 9C2.2 3.5 5.5 1.2 10 1.2S17.8 3.5 17.8 9V21c0 4.3-3.2 6.3-7.8 6.3S2.2 25.3 2.2 21z" fill="#6fb5e3"/>
<circle cx="6.5" cy="7.3" r="3.1" fill="#fff"/><circle cx="13.5" cy="7.3" r="3.1" fill="#fff"/>
<circle cx="6.9" cy="7.5" r="1.5" fill="#111"/><circle cx="13.1" cy="7.5" r="1.5" fill="#111"/>
<ellipse cx="10" cy="10.6" rx="1.4" ry="1" fill="#3a2a22"/><rect x="9.2" y="11.2" width="1.6" height="1.6" fill="#fff"/></svg>
<div class="t" style="left:236px;top:653.4px;font-size:27.7px;color:#bbbbbb;font-weight:400;font-family:'Liberation Sans', sans-serif;">bizctx.go</div>
<svg class="r" style="left:203.5px;top:694px" width="20" height="28" viewBox="0 0 20 28"><path d="M3.2 2.2a2.3 2.3 0 1 0 1.6 3.6zM16.8 2.2a2.3 2.3 0 1 1 -1.6 3.6z" fill="#6fb5e3"/>
<circle cx="1.3" cy="14" r="1.2" fill="#b9876a"/><circle cx="18.7" cy="14" r="1.2" fill="#b9876a"/>
<circle cx="5.5" cy="26.6" r="1.2" fill="#b9876a"/><circle cx="14.5" cy="26.6" r="1.2" fill="#b9876a"/>
<path d="M2.2 9C2.2 3.5 5.5 1.2 10 1.2S17.8 3.5 17.8 9V21c0 4.3-3.2 6.3-7.8 6.3S2.2 25.3 2.2 21z" fill="#6fb5e3"/>
<circle cx="6.5" cy="7.3" r="3.1" fill="#fff"/><circle cx="13.5" cy="7.3" r="3.1" fill="#fff"/>
<circle cx="6.9" cy="7.5" r="1.5" fill="#111"/><circle cx="13.1" cy="7.5" r="1.5" fill="#111"/>
<ellipse cx="10" cy="10.6" rx="1.4" ry="1" fill="#3a2a22"/><rect x="9.2" y="11.2" width="1.6" height="1.6" fill="#fff"/></svg>
<div class="t" style="left:236px;top:693.4px;font-size:27.7px;color:#bbbbbb;font-weight:400;font-family:'Liberation Sans', sans-serif;">captcha.go</div>
<svg class="r" style="left:203.5px;top:734px" width="20" height="28" viewBox="0 0 20 28"><path d="M3.2 2.2a2.3 2.3 0 1 0 1.6 3.6zM16.8 2.2a2.3 2.3 0 1 1 -1.6 3.6z" fill="#6fb5e3"/>
<circle cx="1.3" cy="14" r="1.2" fill="#b9876a"/><circle cx="18.7" cy="14" r="1.2" fill="#b9876a"/>
<circle cx="5.5" cy="26.6" r="1.2" fill="#b9876a"/><circle cx="14.5" cy="26.6" r="1.2" fill="#b9876a"/>
<path d="M2.2 9C2.2 3.5 5.5 1.2 10 1.2S17.8 3.5 17.8 9V21c0 4.3-3.2 6.3-7.8 6.3S2.2 25.3 2.2 21z" fill="#6fb5e3"/>
<circle cx="6.5" cy="7.3" r="3.1" fill="#fff"/><circle cx="13.5" cy="7.3" r="3.1" fill="#fff"/>
<circle cx="6.9" cy="7.5" r="1.5" fill="#111"/><circle cx="13.1" cy="7.5" r="1.5" fill="#111"/>
<ellipse cx="10" cy="10.6" rx="1.4" ry="1" fill="#3a2a22"/><rect x="9.2" y="11.2" width="1.6" height="1.6" fill="#fff"/></svg>
<div class="t" style="left:236px;top:733.4px;font-size:27.7px;color:#bbbbbb;font-weight:400;font-family:'Liberation Sans', sans-serif;">category.go</div>
<svg class="r" style="left:203.5px;top:774px" width="20" height="28" viewBox="0 0 20 28"><path d="M3.2 2.2a2.3 2.3 0 1 0 1.6 3.6zM16.8 2.2a2.3 2.3 0 1 1 -1.6 3.6z" fill="#6fb5e3"/>
<circle cx="1.3" cy="14" r="1.2" fill="#b9876a"/><circle cx="18.7" cy="14" r="1.2" fill="#b9876a"/>
<circle cx="5.5" cy="26.6" r="1.2" fill="#b9876a"/><circle cx="14.5" cy="26.6" r="1.2" fill="#b9876a"/>
<path d="M2.2 9C2.2 3.5 5.5 1.2 10 1.2S17.8 3.5 17.8 9V21c0 4.3-3.2 6.3-7.8 6.3S2.2 25.3 2.2 21z" fill="#6fb5e3"/>
<circle cx="6.5" cy="7.3" r="3.1" fill="#fff"/><circle cx="13.5" cy="7.3" r="3.1" fill="#fff"/>
<circle cx="6.9" cy="7.5" r="1.5" fill="#111"/><circle cx="13.1" cy="7.5" r="1.5" fill="#111"/>
<ellipse cx="10" cy="10.6" rx="1.4" ry="1" fill="#3a2a22"/><rect x="9.2" y="11.2" width="1.6" height="1.6" fill="#fff"/></svg>
<div class="t" style="left:236px;top:773.4px;font-size:27.7px;color:#bbbbbb;font-weight:400;font-family:'Liberation Sans', sans-serif;">content.go</div>
<svg class="r" style="left:203.5px;top:814px" width="20" height="28" viewBox="0 0 20 28"><path d="M3.2 2.2a2.3 2.3 0 1 0 1.6 3.6zM16.8 2.2a2.3 2.3 0 1 1 -1.6 3.6z" fill="#6fb5e3"/>
<circle cx="1.3" cy="14" r="1.2" fill="#b9876a"/><circle cx="18.7" cy="14" r="1.2" fill="#b9876a"/>
<circle cx="5.5" cy="26.6" r="1.2" fill="#b9876a"/><circle cx="14.5" cy="26.6" r="1.2" fill="#b9876a"/>
<path d="M2.2 9C2.2 3.5 5.5 1.2 10 1.2S17.8 3.5 17.8 9V21c0 4.3-3.2 6.3-7.8 6.3S2.2 25.3 2.2 21z" fill="#6fb5e3"/>
<circle cx="6.5" cy="7.3" r="3.1" fill="#fff"/><circle cx="13.5" cy="7.3" r="3.1" fill="#fff"/>
<circle cx="6.9" cy="7.5" r="1.5" fill="#111"/><circle cx="13.1" cy="7.5" r="1.5" fill="#111"/>
<ellipse cx="10" cy="10.6" rx="1.4" ry="1" fill="#3a2a22"/><rect x="9.2" y="11.2" width="1.6" height="1.6" fill="#fff"/></svg>
<div class="t" style="left:236px;top:813.4px;font-size:27.7px;color:#bbbbbb;font-weight:400;font-family:'Liberation Sans', sans-serif;">file.go</div>
<svg class="r" style="left:203.5px;top:854px" width="20" height="28" viewBox="0 0 20 28"><path d="M3.2 2.2a2.3 2.3 0 1 0 1.6 3.6zM16.8 2.2a2.3 2.3 0 1 1 -1.6 3.6z" fill="#6fb5e3"/>
<circle cx="1.3" cy="14" r="1.2" fill="#b9876a"/><circle cx="18.7" cy="14" r="1.2" fill="#b9876a"/>
<circle cx="5.5" cy="26.6" r="1.2" fill="#b9876a"/><circle cx="14.5" cy="26.6" r="1.2" fill="#b9876a"/>
<path d="M2.2 9C2.2 3.5 5.5 1.2 10 1.2S17.8 3.5 17.8 9V21c0 4.3-3.2 6.3-7.8 6.3S2.2 25.3 2.2 21z" fill="#6fb5e3"/>
<circle cx="6.5" cy="7.3" r="3.1" fill="#fff"/><circle cx="13.5" cy="7.3" r="3.1" fill="#fff"/>
<circle cx="6.9" cy="7.5" r="1.5" fill="#111"/><circle cx="13.1" cy="7.5" r="1.5" fill="#111"/>
<ellipse cx="10" cy="10.6" rx="1.4" ry="1" fill="#3a2a22"/><rect x="9.2" y="11.2" width="1.6" height="1.6" fill="#fff"/></svg>
<div class="t" style="left:236px;top:853.4px;font-size:27.7px;color:#bbbbbb;font-weight:400;font-family:'Liberation Sans', sans-serif;">interact.go</div>
<svg class="r" style="left:203.5px;top:894px" width="20" height="28" viewBox="0 0 20 28"><path d="M3.2 2.2a2.3 2.3 0 1 0 1.6 3.6zM16.8 2.2a2.3 2.3 0 1 1 -1.6 3.6z" fill="#6fb5e3"/>
<circle cx="1.3" cy="14" r="1.2" fill="#b9876a"/><circle cx="18.7" cy="14" r="1.2" fill="#b9876a"/>
<circle cx="5.5" cy="26.6" r="1.2" fill="#b9876a"/><circle cx="14.5" cy="26.6" r="1.2" fill="#b9876a"/>
<path d="M2.2 9C2.2 3.5 5.5 1.2 10 1.2S17.8 3.5 17.8 9V21c0 4.3-3.2 6.3-7.8 6.3S2.2 25.3 2.2 21z" fill="#6fb5e3"/>
<circle cx="6.5" cy="7.3" r="3.1" fill="#fff"/><circle cx="13.5" cy="7.3" r="3.1" fill="#fff"/>
<circle cx="6.9" cy="7.5" r="1.5" fill="#111"/><circle cx="13.1" cy="7.5" r="1.5" fill="#111"/>
<ellipse cx="10" cy="10.6" rx="1.4" ry="1" fill="#3a2a22"/><rect x="9.2" y="11.2" width="1.6" height="1.6" fill="#fff"/></svg>
<div class="t" style="left:236px;top:893.4px;font-size:27.7px;color:#bbbbbb;font-weight:400;font-family:'Liberation Sans', sans-serif;">menu.go</div>
<svg class="r" style="left:203.5px;top:934px" width="20" height="28" viewBox="0 0 20 28"><path d="M3.2 2.2a2.3 2.3 0 1 0 1.6 3.6zM16.8 2.2a2.3 2.3 0 1 1 -1.6 3.6z" fill="#6fb5e3"/>
<circle cx="1.3" cy="14" r="1.2" fill="#b9876a"/><circle cx="18.7" cy="14" r="1.2" fill="#b9876a"/>
<circle cx="5.5" cy="26.6" r="1.2" fill="#b9876a"/><circle cx="14.5" cy="26.6" r="1.2" fill="#b9876a"/>
<path d="M2.2 9C2.2 3.5 5.5 1.2 10 1.2S17.8 3.5 17.8 9V21c0 4.3-3.2 6.3-7.8 6.3S2.2 25.3 2.2 21z" fill="#6fb5e3"/>
<circle cx="6.5" cy="7.3" r="3.1" fill="#fff"/><circle cx="13.5" cy="7.3" r="3.1" fill="#fff"/>
<circle cx="6.9" cy="7.5" r="1.5" fill="#111"/><circle cx="13.1" cy="7.5" r="1.5" fill="#111"/>
<ellipse cx="10" cy="10.6" rx="1.4" ry="1" fill="#3a2a22"/><rect x="9.2" y="11.2" width="1.6" height="1.6" fill="#fff"/></svg>
<div class="t" style="left:236px;top:933.4px;font-size:27.7px;color:#bbbbbb;font-weight:400;font-family:'Liberation Sans', sans-serif;">middleware.go</div>
<svg class="r" style="left:203.5px;top:974px" width="20" height="28" viewBox="0 0 20 28"><path d="M3.2 2.2a2.3 2.3 0 1 0 1.6 3.6zM16.8 2.2a2.3 2.3 0 1 1 -1.6 3.6z" fill="#6fb5e3"/>
<circle cx="1.3" cy="14" r="1.2" fill="#b9876a"/><circle cx="18.7" cy="14" r="1.2" fill="#b9876a"/>
<circle cx="5.5" cy="26.6" r="1.2" fill="#b9876a"/><circle cx="14.5" cy="26.6" r="1.2" fill="#b9876a"/>
<path d="M2.2 9C2.2 3.5 5.5 1.2 10 1.2S17.8 3.5 17.8 9V21c0 4.3-3.2 6.3-7.8 6.3S2.2 25.3 2.2 21z" fill="#6fb5e3"/>
<circle cx="6.5" cy="7.3" r="3.1" fill="#fff"/><circle cx="13.5" cy="7.3" r="3.1" fill="#fff"/>
<circle cx="6.9" cy="7.5" r="1.5" fill="#111"/><circle cx="13.1" cy="7.5" r="1.5" fill="#111"/>
<ellipse cx="10" cy="10.6" rx="1.4" ry="1" fill="#3a2a22"/><rect x="9.2" y="11.2" width="1.6" height="1.6" fill="#fff"/></svg>
<div class="t" style="left:236px;top:973.4px;font-size:27.7px;color:#bbbbbb;font-weight:400;font-family:'Liberation Sans', sans-serif;">reply.go</div>
<svg class="r" style="left:203.5px;top:1014px" width="20" height="28" viewBox="0 0 20 28"><path d="M3.2 2.2a2.3 2.3 0 1 0 1.6 3.6zM16.8 2.2a2.3 2.3 0 1 1 -1.6 3.6z" fill="#6fb5e3"/>
<circle cx="1.3" cy="14" r="1.2" fill="#b9876a"/><circle cx="18.7" cy="14" r="1.2" fill="#b9876a"/>
<circle cx="5.5" cy="26.6" r="1.2" fill="#b9876a"/><circle cx="14.5" cy="26.6" r="1.2" fill="#b9876a"/>
<path d="M2.2 9C2.2 3.5 5.5 1.2 10 1.2S17.8 3.5 17.8 9V21c0 4.3-3.2 6.3-7.8 6.3S2.2 25.3 2.2 21z" fill="#6fb5e3"/>
<circle cx="6.5" cy="7.3" r="3.1" fill="#fff"/><circle cx="13.5" cy="7.3" r="3.1" fill="#fff"/>
<circle cx="6.9" cy="7.5" r="1.5" fill="#111"/><circle cx="13.1" cy="7.5" r="1.5" fill="#111"/>
<ellipse cx="10" cy="10.6" rx="1.4" ry="1" fill="#3a2a22"/><rect x="9.2" y="11.2" width="1.6" height="1.6" fill="#fff"/></svg>
<div class="t" style="left:236px;top:1013.4px;font-size:27.7px;color:#bbbbbb;font-weight:400;font-family:'Liberation Sans', sans-serif;">session.go</div>
<svg class="r" style="left:203.5px;top:1054px" width="20" height="28" viewBox="0 0 20 28"><path d="M3.2 2.2a2.3 2.3 0 1 0 1.6 3.6zM16.8 2.2a2.3 2.3 0 1 1 -1.6 3.6z" fill="#6fb5e3"/>
<circle cx="1.3" cy="14" r="1.2" fill="#b9876a"/><circle cx="18.7" cy="14" r="1.2" fill="#b9876a"/>
<circle cx="5.5" cy="26.6" r="1.2" fill="#b9876a"/><circle cx="14.5" cy="26.6" r="1.2" fill="#b9876a"/>
<path d="M2.2 9C2.2 3.5 5.5 1.2 10 1.2S17.8 3.5 17.8 9V21c0 4.3-3.2 6.3-7.8 6.3S2.2 25.3 2.2 21z" fill="#6fb5e3"/>
<circle cx="6.5" cy="7.3" r="3.1" fill="#fff"/><circle cx="13.5" cy="7.3" r="3.1" fill="#fff"/>
<circle cx="6.9" cy="7.5" r="1.5" fill="#111"/><circle cx="13.1" cy="7.5" r="1.5" fill="#111"/>
<ellipse cx="10" cy="10.6" rx="1.4" ry="1" fill="#3a2a22"/><rect x="9.2" y="11.2" width="1.6" height="1.6" fill="#fff"/></svg>
<div class="t" style="left:236px;top:1053.4px;font-size:27.7px;color:#bbbbbb;font-weight:400;font-family:'Liberation Sans', sans-serif;">setting.go</div>
<svg class="r" style="left:203.5px;top:1094px" width="20" height="28" viewBox="0 0 20 28"><path d="M3.2 2.2a2.3 2.3 0 1 0 1.6 3.6zM16.8 2.2a2.3 2.3 0 1 1 -1.6 3.6z" fill="#6fb5e3"/>
<circle cx="1.3" cy="14" r="1.2" fill="#b9876a"/><circle cx="18.7" cy="14" r="1.2" fill="#b9876a"/>
<circle cx="5.5" cy="26.6" r="1.2" fill="#b9876a"/><circle cx="14.5" cy="26.6" r="1.2" fill="#b9876a"/>
<path d="M2.2 9C2.2 3.5 5.5 1.2 10 1.2S17.8 3.5 17.8 9V21c0 4.3-3.2 6.3-7.8 6.3S2.2 25.3 2.2 21z" fill="#6fb5e3"/>
<circle cx="6.5" cy="7.3" r="3.1" fill="#fff"/><circle cx="13.5" cy="7.3" r="3.1" fill="#fff"/>
<circle cx="6.9" cy="7.5" r="1.5" fill="#111"/><circle cx="13.1" cy="7.5" r="1.5" fill="#111"/>
<ellipse cx="10" cy="10.6" rx="1.4" ry="1" fill="#3a2a22"/><rect x="9.2" y="11.2" width="1.6" height="1.6" fill="#fff"/></svg>
<div class="t" style="left:236px;top:1093.4px;font-size:27.7px;color:#bbbbbb;font-weight:400;font-family:'Liberation Sans', sans-serif;">user.go</div>
<svg class="r" style="left:203.5px;top:1134px" width="20" height="28" viewBox="0 0 20 28"><path d="M3.2 2.2a2.3 2.3 0 1 0 1.6 3.6zM16.8 2.2a2.3 2.3 0 1 1 -1.6 3.6z" fill="#6fb5e3"/>
<circle cx="1.3" cy="14" r="1.2" fill="#b9876a"/><circle cx="18.7" cy="14" r="1.2" fill="#b9876a"/>
<circle cx="5.5" cy="26.6" r="1.2" fill="#b9876a"/><circle cx="14.5" cy="26.6" r="1.2" fill="#b9876a"/>
<path d="M2.2 9C2.2 3.5 5.5 1.2 10 1.2S17.8 3.5 17.8 9V21c0 4.3-3.2 6.3-7.8 6.3S2.2 25.3 2.2 21z" fill="#6fb5e3"/>
<circle cx="6.5" cy="7.3" r="3.1" fill="#fff"/><circle cx="13.5" cy="7.3" r="3.1" fill="#fff"/>
<circle cx="6.9" cy="7.5" r="1.5" fill="#111"/><circle cx="13.1" cy="7.5" r="1.5" fill="#111"/>
<ellipse cx="10" cy="10.6" rx="1.4" ry="1" fill="#3a2a22"/><rect x="9.2" y="11.2" width="1.6" height="1.6" fill="#fff"/></svg>
<div class="t" style="left:236px;top:1133.4px;font-size:27.7px;color:#bbbbbb;font-weight:400;font-family:'Liberation Sans', sans-serif;">view.go</div>
<svg class="r" style="left:93px;top:1178px" width="14" height="20" viewBox="0 0 14 20"><path d="M2.5 2L10.5 10L2.5 18" stroke="#afb1b3" stroke-width="2.6" fill="none"/></svg>
<svg class="r" style="left:128.0px;top:1176px" width="28" height="23" viewBox="0 0 28 23"><path d="M0 0H10L13.5 4H28V22H0z" fill="#87939a"/></svg>
<div class="t" style="left:164px;top:1173.4px;font-size:27.7px;color:#bbbbbb;font-weight:400;font-family:'Liberation Sans', sans-serif;">manifest</div>
<svg class="r" style="left:93px;top:1218px" width="14" height="20" viewBox="0 0 14 20"><path d="M2.5 2L10.5 10L2.5 18" stroke="#afb1b3" stroke-width="2.6" fill="none"/></svg>
<svg class="r" style="left:128.0px;top:1216px" width="28" height="23" viewBox="0 0 28 23"><path d="M0 0H10L13.5 4H28V22H0z" fill="#87939a"/></svg>
<div class="t" style="left:164px;top:1213.4px;font-size:27.7px;color:#bbbbbb;font-weight:400;font-family:'Liberation Sans', sans-serif;">resource</div>
<svg class="r" style="left:93px;top:1258px" width="14" height="20" viewBox="0 0 14 20"><path d="M2.5 2L10.5 10L2.5 18" stroke="#afb1b3" stroke-width="2.6" fill="none"/></svg>
<svg class="r" style="left:128.0px;top:1256px" width="28" height="23" viewBox="0 0 28 23"><path d="M0 0H10L13.5 4H28V22H0z" fill="#87939a"/></svg>
<div class="t" style="left:164px;top:1253.4px;font-size:27.7px;color:#bbbbbb;font-weight:400;font-family:'Liberation Sans', sans-serif;">utility</div>
<svg class="r" style="left:131.5px;top:1294px" width="23" height="29" viewBox="0 0 23 29"><path d="M7 0H20V28H0V7H7z" fill="#87939a"/><path d="M0 5.5L5.5 0V5.5z" fill="#87939a"/><path d="M4 14.5h12M4 18.5h12M4 22.5h8" stroke="#3c3f41" stroke-width="2"/></svg>
<div class="t" style="left:164px;top:1293.4px;font-size:27.7px;color:#bbbbbb;font-weight:400;font-family:'Liberation Sans', sans-serif;">.gitattributes</div>
<svg class="r" style="left:131.5px;top:1334px" width="23" height="29" viewBox="0 0 23 29"><path d="M7 0H20V18A8 8 0 0 0 11 28H0V7H7z" fill="#87939a"/><path d="M0 5.5L5.5 0V5.5z" fill="#87939a"/><circle cx="17" cy="23" r="5" fill="none" stroke="#87939a" stroke-width="2"/><path d="M14 26L20 20" stroke="#87939a" stroke-width="2"/></svg>
<div class="t" style="left:164px;top:1333.4px;font-size:27.7px;color:#bbbbbb;font-weight:400;font-family:'Liberation Sans', sans-serif;">.gitignore</div>
<svg class="r" style="left:93px;top:1378px" width="14" height="20" viewBox="0 0 14 20"><path d="M2.5 2L10.5 10L2.5 18" stroke="#afb1b3" stroke-width="2.6" fill="none"/></svg>
<svg class="r" style="left:131.5px;top:1374px" width="23" height="29" viewBox="0 0 23 29"><path d="M7 0H20V28H0V7H7z" fill="#87939a"/><path d="M0 5.5L5.5 0V5.5z" fill="#87939a"/><path d="M4 14.5h12M4 18.5h12M4 22.5h8" stroke="#3c3f41" stroke-width="2"/></svg>
<div class="t" style="left:164px;top:1373.4px;font-size:27.7px;color:#bbbbbb;font-weight:400;font-family:'Liberation Sans', sans-serif;">go.mod</div>
<svg class="r" style="left:131.5px;top:1414px" width="23" height="29" viewBox="0 0 23 29"><path d="M7 0H20V28H0V7H7z" fill="#87939a"/><path d="M0 5.5L5.5 0V5.5z" fill="#87939a"/><path d="M4 14.5h12M4 18.5h12M4 22.5h8" stroke="#3c3f41" stroke-width="2"/></svg>
<div class="t" style="left:164px;top:1413.4px;font-size:27.7px;color:#bbbbbb;font-weight:400;font-family:'Liberation Sans', sans-serif;">LICENSE</div>
<svg class="r" style="left:131.5px;top:1454px" width="20" height="28" viewBox="0 0 20 28"><path d="M3.2 2.2a2.3 2.3 0 1 0 1.6 3.6zM16.8 2.2a2.3 2.3 0 1 1 -1.6 3.6z" fill="#6fb5e3"/>
<circle cx="1.3" cy="14" r="1.2" fill="#b9876a"/><circle cx="18.7" cy="14" r="1.2" fill="#b9876a"/>
<circle cx="5.5" cy="26.6" r="1.2" fill="#b9876a"/><circle cx="14.5" cy="26.6" r="1.2" fill="#b9876a"/>
<path d="M2.2 9C2.2 3.5 5.5 1.2 10 1.2S17.8 3.5 17.8 9V21c0 4.3-3.2 6.3-7.8 6.3S2.2 25.3 2.2 21z" fill="#6fb5e3"/>
<circle cx="6.5" cy="7.3" r="3.1" fill="#fff"/><circle cx="13.5" cy="7.3" r="3.1" fill="#fff"/>
<circle cx="6.9" cy="7.5" r="1.5" fill="#111"/><circle cx="13.1" cy="7.5" r="1.5" fill="#111"/>
<ellipse cx="10" cy="10.6" rx="1.4" ry="1" fill="#3a2a22"/><rect x="9.2" y="11.2" width="1.6" height="1.6" fill="#fff"/></svg>
<div class="t" style="left:164px;top:1453.4px;font-size:27.7px;color:#bbbbbb;font-weight:400;font-family:'Liberation Sans', sans-serif;">main.go</div>
<svg class="r" style="left:127.5px;top:1497px" width="28" height="24" viewBox="0 0 28 24"><path d="M1.5 22V2H7L14 12L21 2H26.5V22H21V11L14 20L7 11V22z" fill="#3f94b8"/></svg>
<div class="t" style="left:164px;top:1493.4px;font-size:27.7px;color:#bbbbbb;font-weight:400;font-family:'Liberation Sans', sans-serif;">Makefile</div>
<svg class="r" style="left:127px;top:1532px" width="32" height="33" viewBox="0 0 32 33"><path d="M12 2.2H25V16H5V9.8H12z" fill="#87939a"/><path d="M5 8.3L11.2 2.2V8.3z" fill="#87939a"/><rect x="1" y="18" width="30" height="13.7" fill="#3d8fb0"/><text x="3" y="29.6" font-family="Liberation Sans" font-weight="700" font-size="12" fill="#2b3a44">MD</text></svg>
<div class="t" style="left:164px;top:1533.4px;font-size:27.7px;color:#bbbbbb;font-weight:400;font-family:'Liberation Sans', sans-serif;">README.MD</div>
<svg class="r" style="left:57px;top:1578px" width="14" height="20" viewBox="0 0 14 20"><path d="M2.5 2L10.5 10L2.5 18" stroke="#afb1b3" stroke-width="2.6" fill="none"/></svg>
<svg class="r" style="left:92px;top:1572px" width="30" height="26" viewBox="0 0 30 26"><rect x="0" y="6" width="4" height="20" fill="#87939a"/><rect x="6" y="6" width="4" height="20" fill="#62b543"/><rect x="12" y="1.5" width="4" height="24.5" fill="#87939a"/><rect x="18" y="6" width="4" height="20" fill="#40b6e0"/><rect x="24" y="10" width="4" height="16" fill="#87939a"/></svg>
<div class="t" style="left:128px;top:1573.4px;font-size:27.7px;color:#bbbbbb;font-weight:400;font-family:'Liberation Sans', sans-serif;">External Libraries</div>
<svg class="r" style="left:57px;top:1618px" width="14" height="20" viewBox="0 0 14 20"><path d="M2.5 2L10.5 10L2.5 18" stroke="#afb1b3" stroke-width="2.6" fill="none"/></svg>
<svg class="r" style="left:91.5px;top:1613px" width="32" height="32" viewBox="0 0 32 32"><rect x="0" y="0" width="20" height="17" fill="#87939a"/><path d="M3 3l5 4-5 4" stroke="#3c3f41" stroke-width="1.8" fill="none"/><circle cx="20" cy="20" r="10" fill="#40b6e0"/><path d="M19 14v7l4 3" stroke="#2b3a44" stroke-width="2.2" fill="none"/></svg>
<div class="t" style="left:128px;top:1613.4px;font-size:27.7px;color:#bbbbbb;font-weight:400;font-family:'Liberation Sans', sans-serif;">Scratches and Consoles</div>
<svg class="r" style="left:18px;top:72px" width="30" height="24" viewBox="0 0 30 24"><path d="M0 1h9l3 3h12v4H6L0 22z" fill="#afb1b3"/><path d="M6 10h22l-6 12H0z" fill="#afb1b3"/></svg>
<svg class="r" style="left:70px;top:72px" width="25" height="24" viewBox="0 0 25 24"><path d="M0 0h20l4 4v20H0z" fill="#afb1b3"/><rect x="4" y="3" width="15" height="8" fill="#3c3f41"/><rect x="7" y="16" width="10" height="8" fill="#3c3f41"/><rect x="9" y="19" width="6" height="5" fill="#afb1b3"/></svg>
<svg class="r" style="left:121px;top:72px" width="26" height="24" viewBox="0 0 26 24"><path d="M21 8A10 10 0 0 0 3.5 8M5 16A10 10 0 0 0 22.5 16" stroke="#afb1b3" stroke-width="3" fill="none"/><path d="M1 3v8h8z" fill="#afb1b3"/><path d="M25 21v-8h-8z" fill="#afb1b3"/></svg>
<div class="r" style="left:166px;top:64px;width:2px;height:40px;background:#505050;"></div>
<div class="r" style="left:284px;top:64px;width:2px;height:40px;background:#505050;"></div>
<div class="r" style="left:370px;top:64px;width:2px;height:40px;background:#505050;"></div>
<div class="r" style="left:1010px;top:64px;width:2px;height:40px;background:#505050;"></div>
<div class="r" style="left:1394px;top:64px;width:2px;height:40px;background:#505050;"></div>
<svg class="r" style="left:185px;top:73px" width="28" height="22" viewBox="0 0 28 22"><path d="M27 11H4M12 2L3 11l9 9" stroke="#afb1b3" stroke-width="3.2" fill="none"/></svg>
<svg class="r" style="left:239px;top:73px" width="28" height="22" viewBox="0 0 28 22"><path d="M1 11H24M16 2l9 9l-9 9" stroke="#5e6062" stroke-width="3.2" fill="none"/></svg>
<svg class="r" style="left:302px;top:71px" width="32" height="26" viewBox="0 0 32 26"><path d="M20.5 1.5a5 5 0 0 1 5 5.5c0 2.5-1 4.5-2.5 6c3.5 1 5.5 2.5 6.5 5H23c-1.5-2-3-3-5-3.5c1-1.5 2-4 2-6.5c0-2-.5-4-1.5-5.5c.6-.6 1.5-1 2.5-1z" fill="#afb1b3"/><path d="M13 2a6 6 0 0 1 6 6.5c0 3-1.3 5.5-3 7c5 1 8 4 8.5 9H1.5C2 19.5 5 16.5 10 15.5c-1.7-1.5-3-4-3-7A6 6 0 0 1 13 2z" fill="#afb1b3"/></svg>
<svg class="r" style="left:338px;top:81px" width="17" height="10" viewBox="0 0 18 11"><path d="M0 0h17l-8.5 10z" fill="#afb1b3"/></svg>
<div class="r" style="left:390px;top:62px;width:318px;height:40px;border:2px solid #5e6163;border-radius:7px"></div>
<svg class="r" style="left:412px;top:69px" width="32" height="30" viewBox="0 0 32 30"><path d="M3.5 3a2.5 2.5 0 1 0 2 3.5zM21.5 3a2.5 2.5 0 1 1 -2 3.5z" fill="#4d6a80"/><path d="M3 10C3 4 6.5 1.5 12.5 1.5S22 4 22 10V21c0 5-4 7-9.5 7S3 26 3 21z" fill="#4d6a80"/><circle cx="8.5" cy="8" r="3" fill="#cfd4d8"/><circle cx="16.5" cy="8" r="3" fill="#cfd4d8"/><circle cx="8.8" cy="8.2" r="1.4" fill="#222"/><circle cx="16.2" cy="8.2" r="1.4" fill="#222"/><path d="M19 16l12 7l-12 7z" fill="#4b8f3a"/></svg>
<div class="t" style="left:449px;top:71.1px;font-size:23.1px;color:#bbbbbb;font-weight:400;font-family:'Liberation Sans', sans-serif;">go build focus-single</div>
<svg class="r" style="left:676px;top:80px" width="18" height="11" viewBox="0 0 18 11"><path d="M0 0h17l-8.5 10z" fill="#afb1b3"/></svg>
<svg class="r" style="left:740px;top:72px" width="21" height="24" viewBox="0 0 21 24"><path d="M0 0l19.5 12L0 24z" fill="#499c54"/></svg>
<svg class="r" style="left:787px;top:69px" width="26" height="30" viewBox="0 0 26 30"><path d="M6.3 1.3l4.5 5M19.7 1.3l-4.5 5" stroke="#499c54" stroke-width="2.6"/><path d="M4.5 9a4 4 0 0 1 4-4h9a4 4 0 0 1 4 4v11.5a8.5 8.5 0 0 1 -17 0z" fill="#499c54"/><path d="M0 11.2h26M0 18h26M0 24.6h26" stroke="#499c54" stroke-width="2.3"/><rect x="9.1" y="13.2" width="8.7" height="2.3" fill="#3c3f41"/><rect x="9.1" y="19.2" width="8.7" height="2.3" fill="#3c3f41"/></svg>
<svg class="r" style="left:836px;top:70px" width="34" height="32" viewBox="0 0 34 32"><path d="M1.8 4.6L12 1.4l10.2 3.2V9h-7.5v13.5L12 25.8C6 23.6 1.8 19.2 1.8 13z" fill="#5e6062"/><path d="M17.8 11.5L32.6 21L17.8 30.6z" fill="#5e6062" stroke="#3c3f41" stroke-width="1.8"/></svg>
<svg class="r" style="left:885px;top:69px" width="32" height="32" viewBox="0 0 32 32"><path d="M19 22.5A10.5 10.5 0 1 1 23.5 12" stroke="#5e6062" stroke-width="2.8" fill="none"/><path d="M13 6.5v7.5l-3 3.5" stroke="#5e6062" stroke-width="2" fill="none"/><path d="M16.6 12.2L31.2 21.6L16.6 31.2z" fill="#5e6062" stroke="#3c3f41" stroke-width="1.8"/></svg>
<svg class="r" style="left:930px;top:81.5px" width="17" height="10" viewBox="0 0 17 10"><path d="M0 0h16l-8 9z" fill="#afb1b3"/></svg>
<div class="r" style="left:968px;top:74px;width:20px;height:20px;background:#5d5f61;"></div>
<div class="t" style="left:1030px;top:72.2px;font-size:21.9px;color:#bbbbbb;font-weight:400;font-family:'Liberation Sans', sans-serif;">Git:</div>
<svg class="r" style="left:1090px;top:71px" width="26" height="25" viewBox="0 0 26 25"><path d="M23 2L6 19" stroke="#3592c4" stroke-width="3.4"/><path d="M1 10v14h14z" fill="#3592c4"/></svg>
<svg class="r" style="left:1141px;top:72px" width="29" height="23" viewBox="0 0 29 23"><path d="M1.5 10.5l9 9L27 3" stroke="#499c54" stroke-width="4" fill="none"/></svg>
<svg class="r" style="left:1192px;top:71px" width="26" height="25" viewBox="0 0 26 25"><path d="M2 23L19 6" stroke="#499c54" stroke-width="3.4"/><path d="M11 1h14v14z" fill="#499c54"/></svg>
<svg class="r" style="left:1243px;top:70px" width="30" height="28" viewBox="0 0 30 28"><path d="M29 9H19M1 22h10" stroke="#3592c4" stroke-width="3.2"/><path d="M22 1v16l-8-8z" fill="#3592c4"/><path d="M8 14v14l8-7z" fill="#3592c4"/><path d="M20 8l-3 3M10 23l3-3" stroke="#3592c4" stroke-width="3"/></svg>
<svg class="r" style="left:1295px;top:70px" width="30" height="29" viewBox="0 0 30 29"><circle cx="15" cy="14.5" r="12.5" stroke="#afb1b3" stroke-width="3" fill="none"/><path d="M13.5 8v7.5l5 4" stroke="#afb1b3" stroke-width="3" fill="none"/></svg>
<svg class="r" style="left:1349px;top:70px" width="28" height="28" viewBox="0 0 28 28"><path d="M6 11h12a7 7 0 0 1 0 14h-9" stroke="#5e6062" stroke-width="3.2" fill="none"/><path d="M0 11l8-9v18z" fill="#5e6062"/></svg>
<svg class="r" style="left:1413px;top:69px" width="30" height="31" viewBox="0 0 30 31"><path d="M15 1l13.5 7.5v14L15 30L1.5 22.5v-14z" fill="#5a5c5e"/></svg>
<svg class="r" style="left:1464px;top:69px" width="32" height="32" viewBox="0 0 32 32"><path d="M10 2h20v16h-6" stroke="#5a5c5e" stroke-width="3" fill="none"/><path d="M16 7h10M20 12h6" stroke="#5a5c5e" stroke-width="2.4"/><circle cx="11" cy="19" r="7.5" stroke="#5a5c5e" stroke-width="3" fill="none"/><path d="M16 24l5.5 5.5" stroke="#5a5c5e" stroke-width="3.4"/></svg>
<svg class="r" style="left:1515px;top:71px" width="34" height="26" viewBox="0 0 34 26"><path d="M8 25a7 7 0 0 1 -1-14a10 10 0 0 1 19-2a8 8 0 0 1 1 16z" fill="#5a5c5e"/></svg>
<svg class="r" style="left:2974px;top:69px" width="32" height="31" viewBox="0 0 32 31"><circle cx="12" cy="12" r="9.5" stroke="#afb1b3" stroke-width="3.2" fill="none"/><path d="M19 19l10 10" stroke="#afb1b3" stroke-width="3.6"/></svg>
<svg class="r" style="left:3025px;top:67px" width="34" height="34" viewBox="0 0 34 34"><circle cx="17" cy="17" r="16" fill="#f0a732"/><path d="M17 26V11M10 16l7-7l7 7" stroke="#fff" stroke-width="3.6" fill="none"/></svg>
<svg class="r" style="left:67px;top:127px" width="30" height="28" viewBox="0 0 30 28"><rect x="1" y="1" width="28" height="26" fill="#87939a"/><rect x="3.5" y="6" width="23" height="19" fill="#3a3a3a"/><rect x="5.5" y="8" width="19" height="15" fill="#3d8aa8"/></svg>
<div class="t" style="left:107px;top:124.6px;font-size:28.3px;color:#bbbbbb;font-weight:400;font-family:'Liberation Sans', sans-serif;">Project</div>
<svg class="r" style="left:225px;top:138px" width="19" height="11" viewBox="0 0 19 11"><path d="M0 0h18l-9 10.5z" fill="#afb1b3"/></svg>
<svg class="r" style="left:482px;top:125px" width="31" height="31" viewBox="0 0 31 31"><circle cx="15.5" cy="15.5" r="12.5" stroke="#afb1b3" stroke-width="3.2" fill="none"/><path d="M15.5 2v9M15.5 20v9M2 15.5h9M20 15.5h9" stroke="#afb1b3" stroke-width="3.6"/></svg>
<svg class="r" style="left:537px;top:125px" width="27" height="30" viewBox="0 0 27 30"><path d="M1 3h24M1 27h24" stroke="#afb1b3" stroke-width="4"/><path d="M6 12l7.5-7l7.5 7zM6 18l7.5 7l7.5-7z" fill="#afb1b3"/></svg>
<svg class="r" style="left:588px;top:125px" width="27" height="30" viewBox="0 0 27 30"><path d="M1 15h25" stroke="#afb1b3" stroke-width="3"/><path d="M6 3l7.5 8l7.5-8zM6 27l7.5-8l7.5 8z" fill="#afb1b3"/></svg>
<div class="r" style="left:634px;top:120px;width:2px;height:40px;background:#505050;"></div>
<svg class="r" style="left:654px;top:127px" width="28" height="28" viewBox="0 0 28 28"><circle cx="14" cy="14" r="10" fill="#afb1b3"/><rect x="11" y="0" width="6" height="7" fill="#afb1b3" transform="rotate(0 14 14)"/><rect x="11" y="0" width="6" height="7" fill="#afb1b3" transform="rotate(60 14 14)"/><rect x="11" y="0" width="6" height="7" fill="#afb1b3" transform="rotate(120 14 14)"/><rect x="11" y="0" width="6" height="7" fill="#afb1b3" transform="rotate(180 14 14)"/><rect x="11" y="0" width="6" height="7" fill="#afb1b3" transform="rotate(240 14 14)"/><rect x="11" y="0" width="6" height="7" fill="#afb1b3" transform="rotate(300 14 14)"/><circle cx="14" cy="14" r="4.5" fill="#3c3f41"/></svg>
<div class="r" style="left:708px;top:139px;width:25px;height:3px;background:#afb1b3;"></div>
<svg class="r" style="left:769px;top:125px" width="23" height="30" viewBox="0 0 20 28"><path d="M3.2 2.2a2.3 2.3 0 1 0 1.6 3.6zM16.8 2.2a2.3 2.3 0 1 1 -1.6 3.6z" fill="#6fb5e3"/>
<circle cx="1.3" cy="14" r="1.2" fill="#b9876a"/><circle cx="18.7" cy="14" r="1.2" fill="#b9876a"/>
<circle cx="5.5" cy="26.6" r="1.2" fill="#b9876a"/><circle cx="14.5" cy="26.6" r="1.2" fill="#b9876a"/>
<path d="M2.2 9C2.2 3.5 5.5 1.2 10 1.2S17.8 3.5 17.8 9V21c0 4.3-3.2 6.3-7.8 6.3S2.2 25.3 2.2 21z" fill="#6fb5e3"/>
<circle cx="6.5" cy="7.3" r="3.1" fill="#fff"/><circle cx="13.5" cy="7.3" r="3.1" fill="#fff"/>
<circle cx="6.9" cy="7.5" r="1.5" fill="#111"/><circle cx="13.1" cy="7.5" r="1.5" fill="#111"/>
<ellipse cx="10" cy="10.6" rx="1.4" ry="1" fill="#3a2a22"/><rect x="9.2" y="11.2" width="1.6" height="1.6" fill="#fff"/></svg>
<div class="t" style="left:805px;top:127.1px;font-size:23.05px;color:#bbbbbb;font-weight:400;font-family:'Liberation Sans', sans-serif;">service/content.go</div>
<svg class="r" style="left:1007px;top:132px" width="17" height="17" viewBox="0 0 17 17"><path d="M1 1l15 15M16 1L1 16" stroke="#6e7072" stroke-width="2"/></svg>
<div class="t" style="left:8.0px;top:200.5px;font-size:23px;color:#e6e6e6;font-family:'Liberation Sans', sans-serif;transform-origin:0 0;transform:rotate(-90deg)">Project</div>
<svg class="r" style="left:10px;top:214px" width="23" height="19" viewBox="0 0 23 19"><path d="M0 0H10.5L13 4.3H22V18H0z" fill="#afb1b3"/></svg>
<div class="t" style="left:8.0px;top:355px;font-size:23px;color:#bbbbbb;font-family:'Liberation Sans', sans-serif;transform-origin:0 0;transform:rotate(-90deg)">Commit</div>
<svg class="r" style="left:7px;top:366px" width="28" height="20" viewBox="0 0 28 20"><circle cx="14" cy="10" r="6.3" stroke="#afb1b3" stroke-width="3.6" fill="none"/><path d="M0 10h7M21 10h7" stroke="#afb1b3" stroke-width="3.6"/></svg>
<div class="t" style="left:8.0px;top:568.5px;font-size:23px;color:#bbbbbb;font-family:'Liberation Sans', sans-serif;transform-origin:0 0;transform:rotate(-90deg)">Pull Requests</div>
<svg class="r" style="left:11px;top:578px" width="22" height="26" viewBox="0 0 22 26"><path d="M2 0v26" stroke="#afb1b3" stroke-width="3.6"/><path d="M18 7v17" stroke="#afb1b3" stroke-width="3.6"/><path d="M9 8.5h11" stroke="#afb1b3" stroke-width="3.6"/><path d="M11 2v13l-8-6.5z" fill="#afb1b3"/></svg>
<div class="t" style="left:8.0px;top:1269px;font-size:23px;color:#bbbbbb;font-family:'Liberation Sans', sans-serif;transform-origin:0 0;transform:rotate(-90deg)">Structure</div>
<svg class="r" style="left:11px;top:1281px" width="20" height="20" viewBox="0 0 20 20"><rect x="0" y="10" width="8" height="8" fill="#afb1b3"/><rect x="10" y="0" width="8" height="8" fill="#afb1b3"/><rect x="10" y="10" width="8" height="8" fill="#afb1b3"/></svg>
<div class="t" style="left:8.0px;top:1456px;font-size:23px;color:#bbbbbb;font-family:'Liberation Sans', sans-serif;transform-origin:0 0;transform:rotate(-90deg)">Bookmarks</div>
<svg class="r" style="left:11px;top:1467px" width="20" height="24" viewBox="0 0 20 24"><path d="M1 1H19V23L10 14L1 23z" fill="#afb1b3"/></svg>
<div class="t" style="left:8.0px;top:1623px;font-size:23px;color:#bbbbbb;font-family:'Liberation Sans', sans-serif;transform-origin:0 0;transform:rotate(-90deg)">OpenAPI</div>
<svg class="r" style="left:8px;top:1631px" width="27" height="27" viewBox="0 0 27 27"><rect x="1.2" y="1.2" width="24" height="24" rx="2" fill="#2a2a2a" stroke="#000" stroke-width="2.4"/><rect x="1.2" y="1.2" width="24" height="4.5" fill="#000"/><circle cx="17" cy="3.4" r="0.9" fill="#888"/><circle cx="20" cy="3.4" r="0.9" fill="#888"/><circle cx="23" cy="3.4" r="0.9" fill="#888"/><text x="4" y="18.72" font-family="Liberation Sans" font-weight="700" font-size="10" fill="#000" stroke="#000" stroke-width="0.3">/API</text></svg>
<div class="t" style="left:3063.6px;top:169px;font-size:23px;color:#bbbbbb;font-family:'Liberation Sans', sans-serif;transform-origin:0 0;transform:rotate(90deg)">Database</div>
<svg class="r" style="left:3038px;top:133px" width="26" height="28" viewBox="0 0 26 28"><ellipse cx="13" cy="4.8" rx="11" ry="3.6" fill="#afb1b3"/><path d="M2 8.6c0 2 5 3.4 11 3.4s11-1.4 11-3.4v3.4c0 2-5 3.4-11 3.4S2 14 2 12zM2 14.3c0 2 5 3.4 11 3.4s11-1.4 11-3.4v3.4c0 2-5 3.4-11 3.4S2 19.7 2 17.7zM2 20c0 2 5 3.4 11 3.4s11-1.4 11-3.4v3.4c0 2-5 3.4-11 3.4S2 25.4 2 23.4z" fill="#afb1b3"/></svg>
<div class="t" style="left:3063.6px;top:1135px;font-size:23px;color:#bbbbbb;font-family:'Liberation Sans', sans-serif;transform-origin:0 0;transform:rotate(90deg)">make</div>
<svg class="r" style="left:3041px;top:1103px" width="20" height="18" viewBox="0 0 20 18"><path d="M0.5 1h5.5l4 8l4-8h5.5v16h-4.5V8.5l-3.5 6.5h-3L4.5 8.5V17H0.5z" fill="#afb1b3"/></svg>
<div class="t" style="left:3063.6px;top:1266.5px;font-size:23px;color:#bbbbbb;font-family:'Liberation Sans', sans-serif;transform-origin:0 0;transform:rotate(90deg)">API Security Audit</div>
<svg class="r" style="left:3037px;top:1231px" width="27" height="28" viewBox="0 0 27 28"><rect x="1.2" y="1.2" width="24" height="25" rx="2" fill="#2a2a2a" stroke="#000" stroke-width="2.4"/><rect x="1.2" y="1.2" width="24" height="4.5" fill="#000"/><circle cx="17" cy="3.4" r="0.9" fill="#888"/><circle cx="20" cy="3.4" r="0.9" fill="#888"/><circle cx="23" cy="3.4" r="0.9" fill="#888"/><text x="4" y="19.5" font-family="Liberation Sans" font-weight="700" font-size="10" fill="#000" stroke="#000" stroke-width="0.3">/API</text></svg>
<div class="t" style="left:3063.6px;top:1531px;font-size:23px;color:#bbbbbb;font-family:'Liberation Sans', sans-serif;transform-origin:0 0;transform:rotate(90deg)">Notifications</div>
<svg class="r" style="left:3038px;top:1497px" width="25" height="26" viewBox="0 0 25 26"><path d="M12.5 1a8 8 0 0 1 8 8v7l3.5 4H1l3.5-4V9a8 8 0 0 1 8-8z" fill="#afb1b3"/><path d="M9 22h7a3.5 3.5 0 0 1 -7 0z" fill="#afb1b3"/></svg>
<div class="t" style="left:92.5px;top:1688.7px;font-size:23.5px;color:#bbbbbb;font-weight:400;font-family:'Liberation Sans', sans-serif;transform-origin:0 0;transform:scaleX(0.9157)">Git</div>
<svg class="r" style="left:60px;top:1690px" width="22" height="26" viewBox="0 0 22 26"><circle cx="5.8" cy="4.4" r="3.4" fill="#afb1b3"/><circle cx="5.8" cy="21.8" r="3.4" fill="#afb1b3"/><circle cx="15.9" cy="8.2" r="3.4" fill="#afb1b3"/><path d="M5.8 4.4V21.8M15.9 8.2C15.9 14.5 12.5 16.5 5.8 16.8" stroke="#afb1b3" stroke-width="2.8" fill="none"/></svg>
<div class="t" style="left:195px;top:1688.7px;font-size:23.5px;color:#bbbbbb;font-weight:400;font-family:'Liberation Sans', sans-serif;transform-origin:0 0;transform:scaleX(0.8937)">TODO</div>
<svg class="r" style="left:163px;top:1692px" width="22" height="20" viewBox="0 0 22 20"><path d="M0 2h4M7 2h15M0 10h4M7 10h15M0 18h4M7 18h15" stroke="#afb1b3" stroke-width="3.2"/></svg>
<div class="t" style="left:330px;top:1688.7px;font-size:23.5px;color:#bbbbbb;font-weight:400;font-family:'Liberation Sans', sans-serif;transform-origin:0 0;transform:scaleX(0.9470)">Problems</div>
<svg class="r" style="left:298px;top:1692px" width="22" height="22" viewBox="0 0 22 22"><circle cx="11" cy="11" r="10.5" fill="#afb1b3"/><path d="M11 4.5v8" stroke="#3c3f41" stroke-width="3.2"/><circle cx="11" cy="16.5" r="1.8" fill="#3c3f41"/></svg>
<div class="t" style="left:502px;top:1688.7px;font-size:23.5px;color:#bbbbbb;font-weight:400;font-family:'Liberation Sans', sans-serif;transform-origin:0 0;transform:scaleX(0.9458)">Terminal</div>
<svg class="r" style="left:470px;top:1692px" width="23" height="21" viewBox="0 0 23 21"><rect x="0" y="0" width="23" height="21" fill="#afb1b3"/><path d="M3 4l6 4.5l-6 4.5" stroke="#3c3f41" stroke-width="2" fill="none"/><path d="M11 16h8" stroke="#3c3f41" stroke-width="2"/></svg>
<div class="t" style="left:2853px;top:1688.7px;font-size:23.5px;color:#bbbbbb;font-weight:400;font-family:'Liberation Sans', sans-serif;transform-origin:0 0;transform:scaleX(0.9538)">Audit Problems</div>
<svg class="r" style="left:2817px;top:1689px" width="28" height="28" viewBox="0 0 28 28"><rect x="1.2" y="1.2" width="25" height="25" rx="2" fill="#2a2a2a" stroke="#000" stroke-width="2.4"/><rect x="1.2" y="1.2" width="25" height="4.5" fill="#000"/><circle cx="18" cy="3.4" r="0.9" fill="#888"/><circle cx="21" cy="3.4" r="0.9" fill="#888"/><circle cx="24" cy="3.4" r="0.9" fill="#888"/><text x="4" y="19.5" font-family="Liberation Sans" font-weight="700" font-size="10" fill="#000" stroke="#000" stroke-width="0.3">/API</text></svg>
<svg class="r" style="left:11px;top:1731px" width="26" height="26" viewBox="0 0 26 26"><path d="M7 2h17v17H7z" stroke="#afb1b3" stroke-width="2.4" fill="none"/><path d="M2 6v18h18" stroke="#afb1b3" stroke-width="2.4" fill="none"/></svg>
<svg class="r" style="left:2490px;top:1724px" width="42" height="38" viewBox="0 0 42 38"><circle cx="18.5" cy="18" r="8.3" fill="#afb1b3"/><circle cx="25" cy="15" r="9" fill="#afb1b3"/><circle cx="34" cy="20.5" r="5.6" fill="#afb1b3"/><rect x="18" y="18" width="16" height="8.3" fill="#afb1b3"/><circle cx="35" cy="28.7" r="8.4" fill="#3c3f41"/><circle cx="35" cy="28.7" r="5.2" fill="#afb1b3"/><rect x="33.4" y="21.6" width="3.2" height="3.4" fill="#afb1b3" transform="rotate(0 35 28.7)"/><rect x="33.4" y="21.6" width="3.2" height="3.4" fill="#afb1b3" transform="rotate(60 35 28.7)"/><rect x="33.4" y="21.6" width="3.2" height="3.4" fill="#afb1b3" transform="rotate(120 35 28.7)"/><rect x="33.4" y="21.6" width="3.2" height="3.4" fill="#afb1b3" transform="rotate(180 35 28.7)"/><rect x="33.4" y="21.6" width="3.2" height="3.4" fill="#afb1b3" transform="rotate(240 35 28.7)"/><rect x="33.4" y="21.6" width="3.2" height="3.4" fill="#afb1b3" transform="rotate(300 35 28.7)"/><circle cx="35" cy="28.7" r="2.2" fill="#3c3f41"/><path d="M21 12.8a4.3 4.3 0 1 1 6.1 3.9c-1.5.8-2.2 1.8-2.2 3.3v.8" stroke="#3c3f41" stroke-width="2" fill="none"/><circle cx="24.9" cy="23.6" r="1.25" fill="#3c3f41"/></svg>
<div class="t" style="left:2552.5px;top:1731.0px;font-size:22.6px;color:#bbbbbb;font-weight:400;font-family:'Liberation Sans', sans-serif;transform-origin:0 0;transform:scaleX(0.9484)">13:7 (1 char)</div>
<div class="t" style="left:2701px;top:1731.0px;font-size:22.6px;color:#bbbbbb;font-weight:400;font-family:'Liberation Sans', sans-serif;transform-origin:0 0;transform:scaleX(0.8341)">LF</div>
<div class="t" style="left:2749px;top:1731.0px;font-size:22.6px;color:#bbbbbb;font-weight:400;font-family:'Liberation Sans', sans-serif;transform-origin:0 0;transform:scaleX(0.9998)">UTF-8</div>
<div class="t" style="left:2839px;top:1731.0px;font-size:22.6px;color:#bbbbbb;font-weight:400;font-family:'Liberation Sans', sans-serif;transform-origin:0 0;transform:scaleX(0.9331)">Tab</div>
<svg class="r" style="left:2900px;top:1730px" width="24" height="30" viewBox="0 0 24 30"><circle cx="6" cy="3.6" r="3.5" fill="#afb1b3"/><circle cx="6" cy="24.5" r="3.5" fill="#afb1b3"/><circle cx="17.8" cy="6.2" r="3.5" fill="#afb1b3"/><path d="M6 3.6V24.5M17.8 6.2C17.8 13.5 14.5 15.5 6 17" stroke="#afb1b3" stroke-width="2.8" fill="none"/></svg>
<div class="t" style="left:2933px;top:1731.0px;font-size:22.6px;color:#bbbbbb;font-weight:400;font-family:'Liberation Sans', sans-serif;transform-origin:0 0;transform:scaleX(0.9991)">master</div>
<svg class="r" style="left:3020px;top:1730px" width="26" height="26" viewBox="0 0 26 26"><path d="M3 12.5V8.1a4.75 4.75 0 0 1 9.5 0V12" stroke="#afb1b3" stroke-width="2.6" fill="none"/><rect x="7.7" y="11.8" width="16.5" height="12.4" fill="#afb1b3"/></svg>
</body></html>
